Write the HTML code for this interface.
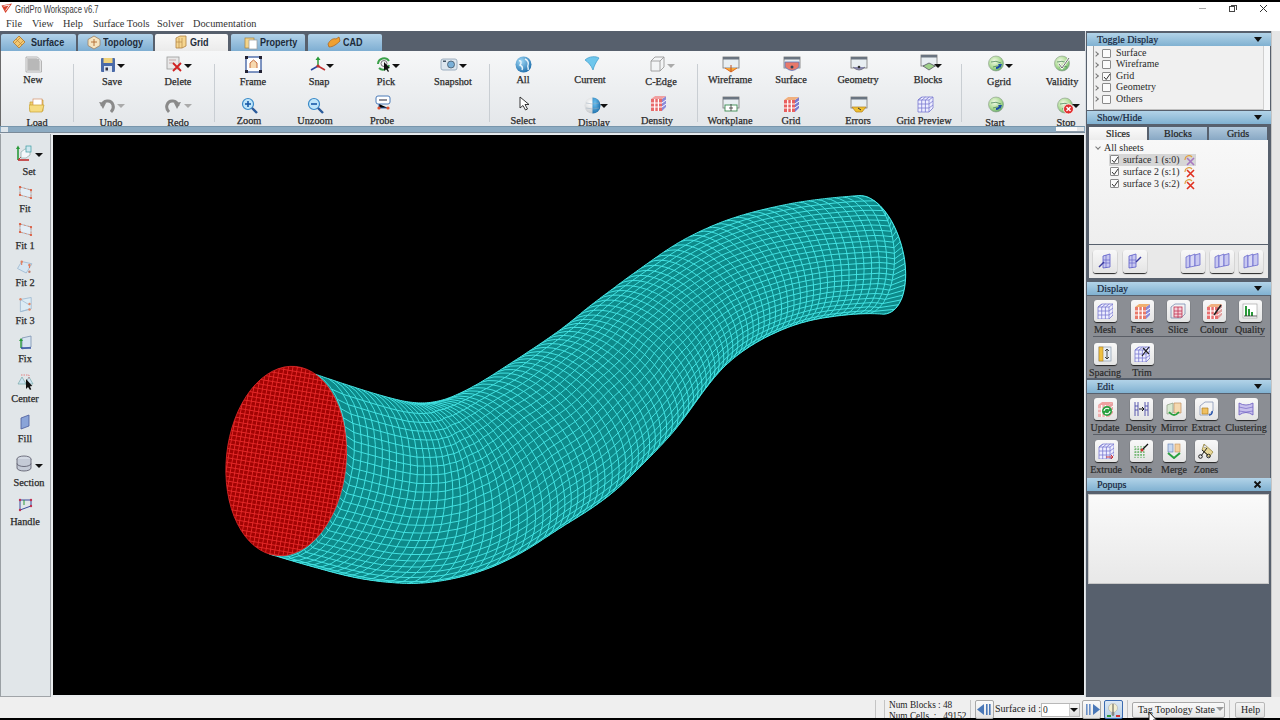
<!DOCTYPE html><html><head><meta charset="utf-8"><style>
*{margin:0;padding:0;box-sizing:border-box}
html,body{width:1280px;height:720px;overflow:hidden;background:#fff;font-family:"Liberation Serif",serif;color:#222}
.abs{position:absolute}
.lbl{position:absolute;-webkit-text-stroke:0.25px #2a2a2a;font-size:10.3px;white-space:nowrap;transform:translateX(-50%);color:#2a2a2a;line-height:12px}
.tab{position:absolute;top:34px;height:17px;border-radius:2px 2px 0 0;background:linear-gradient(#b2d2e9,#7eaed2);font-family:"Liberation Sans",sans-serif;font-weight:bold;font-size:10px;color:#1d2b3a;line-height:17px}
.tab.on{background:linear-gradient(#f8f8f8,#ebebeb)}
.sep{position:absolute;width:1px;background:#c9ced3}
.hdr{position:absolute;left:1087px;width:184px;height:13px;background:linear-gradient(#b2d3e8,#80b1d1);-webkit-text-stroke:0.2px #14243a;font-size:10px;color:#14243a;line-height:13px;padding-left:10px}
.tri{position:absolute;right:9px;top:4px;width:0;height:0;border-left:4.5px solid transparent;border-right:4.5px solid transparent;border-top:5px solid #111}
.btn{position:absolute;width:23px;height:22px;border-radius:3px;background:linear-gradient(#f8f8f8,#e4e4e4);box-shadow:0 1px 1px #222}
.plbl{position:absolute;-webkit-text-stroke:0.2px #2a2a2a;font-size:10px;white-space:nowrap;transform:translateX(-50%);color:#2a2a2a;line-height:12px}
.cb{position:absolute;width:9px;height:9px;border:1px solid #8a8a8a;background:#fbfbfb;border-radius:1px}
.tl{position:absolute;font-size:10px;color:#2a2a2a;line-height:12px;white-space:nowrap}
.chev{position:absolute;width:4px;height:4px;border-right:1px solid #777;border-bottom:1px solid #777;transform:rotate(-45deg)}
</style></head><body>

<div class="abs" style="left:0;top:0;width:1280px;height:2px;background:#000"></div>
<svg class="abs" style="left:1px;top:3px" width="12" height="11"><path d="M0.5 2.5 L11 0.5 L4.5 10 Z" fill="#d8402a"/><path d="M2.5 3.2 L8.5 2 L4.6 7.5" fill="none" stroke="#fff" stroke-width="0.9"/></svg>
<div class="abs" style="left:15px;top:3px;font-family:'Liberation Sans', sans-serif;font-size:10.2px;color:#3a3a3a;line-height:13px;transform:scaleX(0.755);transform-origin:0 0;white-space:nowrap">GridPro Workspace v6.7</div>
<div class="abs" style="left:1199px;top:8px;width:7px;height:1px;background:#aaa"></div>
<div class="abs" style="left:1229px;top:6px;width:6px;height:6px;border:1px solid #444"></div><div class="abs" style="left:1231px;top:5px;width:6px;height:5px;border-top:1px solid #444;border-right:1px solid #444"></div>
<svg class="abs" style="left:1259px;top:4px" width="10" height="9"><path d="M1 1 L8 8 M8 1 L1 8" stroke="#333" stroke-width="1"/></svg>
<div class="abs" style="left:6px;top:17px;font-size:10.3px;color:#333;line-height:13px">File</div>
<div class="abs" style="left:32px;top:17px;font-size:10.3px;color:#333;line-height:13px">View</div>
<div class="abs" style="left:63px;top:17px;font-size:10.3px;color:#333;line-height:13px">Help</div>
<div class="abs" style="left:93px;top:17px;font-size:10.3px;color:#333;line-height:13px">Surface Tools</div>
<div class="abs" style="left:157px;top:17px;font-size:10.3px;color:#333;line-height:13px">Solver</div>
<div class="abs" style="left:193px;top:17px;font-size:10.3px;color:#333;line-height:13px">Documentation</div>
<div class="abs" style="left:0;top:31px;width:1085px;height:20px;background:#57606d"></div>
<div class="tab" style="left:1px;width:75px"></div>
<div class="abs" style="left:31px;top:35px;font-family:'Liberation Sans', sans-serif;font-weight:bold;font-size:10.4px;color:#1d2b3a;line-height:15px;transform:scaleX(0.87);transform-origin:0 0;white-space:nowrap">Surface</div>
<div class="tab" style="left:78px;width:75px"></div>
<div class="abs" style="left:103px;top:35px;font-family:'Liberation Sans', sans-serif;font-weight:bold;font-size:10.4px;color:#1d2b3a;line-height:15px;transform:scaleX(0.87);transform-origin:0 0;white-space:nowrap">Topology</div>
<div class="tab on" style="left:155px;width:73px"></div>
<div class="abs" style="left:190px;top:35px;font-family:'Liberation Sans', sans-serif;font-weight:bold;font-size:10.4px;color:#1d2b3a;line-height:15px;transform:scaleX(0.87);transform-origin:0 0;white-space:nowrap">Grid</div>
<div class="tab" style="left:231px;width:74px"></div>
<div class="abs" style="left:260px;top:35px;font-family:'Liberation Sans', sans-serif;font-weight:bold;font-size:10.4px;color:#1d2b3a;line-height:15px;transform:scaleX(0.87);transform-origin:0 0;white-space:nowrap">Property</div>
<div class="tab" style="left:308px;width:74px"></div>
<div class="abs" style="left:343px;top:35px;font-family:'Liberation Sans', sans-serif;font-weight:bold;font-size:10.4px;color:#1d2b3a;line-height:15px;transform:scaleX(0.87);transform-origin:0 0;white-space:nowrap">CAD</div>
<svg class="abs" style="left:12px;top:35px" width="14" height="15" viewBox="0 0 14 15"><path d="M1 7L7 1L13 7L7 13Z" fill="#f3c870" stroke="#b07830" stroke-width="0.8"/><path d="M4 4L10 10M7 1L13 7M2.5 8.5L8.5 2.5M5.5 11.5L11.5 5.5" stroke="#b07830" stroke-width="0.6"/></svg>
<svg class="abs" style="left:87px;top:35px" width="14" height="15" viewBox="0 0 14 15"><path d="M7 1L13 4.5V10.5L7 14L1 10.5V4.5Z" fill="#f5e4c0" stroke="#a08060" stroke-width="0.8"/><path d="M7 4V11M4 7H10" stroke="#b06a30" stroke-width="0.9"/></svg>
<svg class="abs" style="left:174px;top:35px" width="14" height="15" viewBox="0 0 14 15"><path d="M2 3L6 1H12V11L8 13H2Z" fill="#f6d690" stroke="#b08040" stroke-width="0.8"/><path d="M5 3V13M2 7H8M8 3V13" stroke="#b08040" stroke-width="0.6"/></svg>
<svg class="abs" style="left:244px;top:35px" width="14" height="15" viewBox="0 0 14 15"><rect x="1" y="3" width="9" height="10" fill="#f3d48a" stroke="#a8803a" stroke-width="0.7"/><rect x="5" y="5" width="8" height="9" fill="#fff" stroke="#999" stroke-width="0.7"/></svg>
<svg class="abs" style="left:327px;top:35px" width="14" height="15" viewBox="0 0 14 15"><path d="M1 9C3 5 6 3 9 4L12 2L13 6C10 9 6 12 2 12Z" fill="#f0a030" stroke="#b06a20" stroke-width="0.8"/></svg>
<div class="abs" style="left:0;top:51px;width:1085px;height:75px;background:linear-gradient(#f6f7f8,#e4e7ea);border-left:1px solid #6a6a6a"></div>
<div class="sep" style="left:73px;top:64px;height:58px"></div>
<div class="sep" style="left:214px;top:64px;height:58px"></div>
<div class="sep" style="left:489px;top:64px;height:58px"></div>
<div class="sep" style="left:697px;top:64px;height:58px"></div>
<div class="sep" style="left:961px;top:64px;height:58px"></div>
<svg class="abs" style="left:25px;top:56px" width="18" height="18" viewBox="0 0 18 18"><path d="M1.5 1.5H12L16 5.5V15.5H1.5Z" fill="#c9c9c9" stroke="#f4f4f4" stroke-width="1"/><path d="M1 1H12.5L16.5 5V16H1Z" fill="none" stroke="#9a9a9a" stroke-width="0.7"/><rect x="3" y="3" width="11" height="11" fill="#b8b8b8"/></svg>
<svg class="abs" style="left:100px;top:57px" width="18" height="18" viewBox="0 0 18 18"><rect x="1" y="1" width="14" height="14" rx="1" fill="#4a6aa8"/><rect x="3.5" y="1" width="9" height="5" fill="#f0d27a"/><rect x="4" y="9" width="8" height="6" fill="#dfe6f0"/><rect x="5.5" y="10.5" width="2.5" height="3" fill="#334"/></svg>
<svg class="abs" style="left:166px;top:55px" width="18" height="18" viewBox="0 0 18 18"><rect x="1" y="2" width="12" height="12" fill="#e8e8e8" stroke="#999" stroke-width="0.8"/><path d="M3 5H10M3 8H8" stroke="#b99" stroke-width="0.8"/><path d="M7 8L15 16M15 8L7 16" stroke="#d02020" stroke-width="1.8"/></svg>
<svg class="abs" style="left:245px;top:56px" width="18" height="18" viewBox="0 0 18 18"><rect x="1" y="1" width="15" height="15" fill="#fff" stroke="#2b4f9a" stroke-width="1.2"/><path d="M5 12V7L8.5 4L12 7V12" fill="#f7d9b0" stroke="#c06030" stroke-width="0.9"/><rect x="0" y="0" width="3" height="3" fill="#223"/><rect x="14" y="0" width="3" height="3" fill="#223"/><rect x="0" y="14" width="3" height="3" fill="#223"/><rect x="14" y="14" width="3" height="3" fill="#223"/></svg>
<svg class="abs" style="left:309px;top:56px" width="18" height="18" viewBox="0 0 18 18"><path d="M9 10V2" stroke="#2a9a3a" stroke-width="1.5"/><path d="M6.5 4L9 0.5L11.5 4Z" fill="#2a9a3a"/><path d="M9 10L2 14" stroke="#2846a0" stroke-width="1.5"/><path d="M9 10L16 14" stroke="#c03030" stroke-width="1.5"/><circle cx="9" cy="10" r="1.6" fill="#c03030"/></svg>
<svg class="abs" style="left:375px;top:55px" width="18" height="18" viewBox="0 0 18 18"><path d="M3 9A6 6 0 0 1 14 6" fill="none" stroke="#3aa048" stroke-width="2"/><path d="M14 10A6 6 0 0 1 4 13" fill="none" stroke="#3aa048" stroke-width="2"/><circle cx="9" cy="8.5" r="3" fill="none" stroke="#555" stroke-width="0.8"/><path d="M9 7L9 16L11 14L13 17L14 16.3L12.5 13.5L15 13Z" fill="#111"/></svg>
<svg class="abs" style="left:440px;top:56px" width="18" height="18" viewBox="0 0 18 18"><rect x="1" y="3" width="16" height="11" rx="2" fill="#dde6ee" stroke="#8aa0b4" stroke-width="0.8"/><circle cx="11" cy="8.5" r="3.5" fill="#7ab0d8" stroke="#456" stroke-width="0.8"/><rect x="3" y="4.5" width="3" height="1.5" fill="#456"/></svg>
<svg class="abs" style="left:515px;top:56px" width="18" height="18" viewBox="0 0 18 18"><defs><radialGradient id="gl" cx="0.35" cy="0.3" r="0.8"><stop offset="0" stop-color="#9fd8f6"/><stop offset="1" stop-color="#1668a8"/></radialGradient></defs><circle cx="8.5" cy="8.5" r="8" fill="url(#gl)"/><path d="M4 5C6 4 7 7 5 9C7 10 8 12 7 14M10 3C12 4 14 6 13 9C12 11 14 12 13 14" fill="none" stroke="#e8f4fb" stroke-width="1.4"/></svg>
<svg class="abs" style="left:583px;top:55px" width="18" height="18" viewBox="0 0 18 18"><path d="M2 5C6 1 13 1 16 3C13 7 11 11 10 15C8 10 5 7 2 5Z" fill="#6ec6ec" stroke="#3a98c8" stroke-width="0.7"/></svg>
<svg class="abs" style="left:649px;top:56px" width="18" height="18" viewBox="0 0 18 18"><path d="M2 5L6 1H15V11L11 15H2Z M2 5H11V15 M11 5L15 1" fill="none" stroke="#9a9a9a" stroke-width="0.9"/></svg>
<svg class="abs" style="left:722px;top:56px" width="18" height="18" viewBox="0 0 18 18"><rect x="1" y="1" width="16" height="11" fill="#e8eef2" stroke="#777" stroke-width="0.8"/><rect x="1" y="1" width="16" height="2.5" fill="#6a7480"/><path d="M3 12L9 16L15 12" fill="#f6a83a" stroke="#e06a20" stroke-width="1"/><path d="M9 9V16" stroke="#c05020" stroke-width="1"/></svg>
<svg class="abs" style="left:783px;top:56px" width="18" height="18" viewBox="0 0 18 18"><rect x="1" y="1" width="16" height="11" fill="#e8eef2" stroke="#777" stroke-width="0.8"/><rect x="1" y="1" width="16" height="2.5" fill="#6a7480"/><path d="M2 11Q9 18 16 11V6H2Z" fill="#e8786a" stroke="#5a7ac0" stroke-width="0.8"/><circle cx="9" cy="11" r="1.5" fill="#345"/></svg>
<svg class="abs" style="left:850px;top:56px" width="18" height="18" viewBox="0 0 18 18"><rect x="1" y="1" width="16" height="11" fill="#e8eef2" stroke="#777" stroke-width="0.8"/><rect x="1" y="1" width="16" height="2.5" fill="#6a7480"/><path d="M3 11Q9 17 15 11" fill="#8a8ab0" stroke="#667" stroke-width="0.8"/><circle cx="9" cy="11" r="1.3" fill="#333"/></svg>
<svg class="abs" style="left:920px;top:54px" width="18" height="18" viewBox="0 0 18 18"><rect x="1" y="1" width="16" height="11" fill="#e8eef2" stroke="#777" stroke-width="0.8"/><rect x="1" y="1" width="16" height="2.5" fill="#6a7480"/><path d="M3 12L9 16L15 12L9 9Z" fill="#9fd08a" stroke="#556" stroke-width="0.8"/></svg>
<svg class="abs" style="left:988px;top:55px" width="18" height="18" viewBox="0 0 18 18"><defs><radialGradient id="gbarrow" cx="0.4" cy="0.35" r="0.75"><stop offset="0" stop-color="#f4fbe8"/><stop offset="0.6" stop-color="#a8d890"/><stop offset="1" stop-color="#4a9a5a"/></radialGradient></defs><circle cx="8" cy="8.5" r="7.5" fill="url(#gbarrow)" stroke="#8a9a8a" stroke-width="0.6"/><path d="M3 7Q8 5 13 8M5 12Q9 10 13 12" stroke="#3a7a4a" stroke-width="0.7" fill="none"/><path d="M8 13Q11 13 12 10" fill="none" stroke="#1a4aa8" stroke-width="2"/><path d="M10 9L14 9L12.5 12.5Z" fill="#1a4aa8"/></svg>
<svg class="abs" style="left:1054px;top:55px" width="18" height="18" viewBox="0 0 18 18"><defs><radialGradient id="gbcheck" cx="0.4" cy="0.35" r="0.75"><stop offset="0" stop-color="#f4fbe8"/><stop offset="0.6" stop-color="#a8d890"/><stop offset="1" stop-color="#4a9a5a"/></radialGradient></defs><circle cx="8" cy="8.5" r="7.5" fill="url(#gbcheck)" stroke="#8a9a8a" stroke-width="0.6"/><path d="M3 7Q8 5 13 8M5 12Q9 10 13 12" stroke="#3a7a4a" stroke-width="0.7" fill="none"/><path d="M5 9L8 13L15 3" fill="none" stroke="#fff" stroke-width="2.2"/><path d="M5 9L8 13L15 3" fill="none" stroke="#444" stroke-width="0.8"/></svg>
<svg class="abs" style="left:29px;top:97px" width="18" height="18" viewBox="0 0 18 18"><path d="M1 5H6L7 3H14V14H1Z" fill="#f0d070" stroke="#c8a030" stroke-width="0.7"/><rect x="4" y="2" width="9" height="8" fill="#fff" stroke="#d08050" stroke-width="0.6"/><path d="M0 8H15L13 15H1Z" fill="#f6dc80" stroke="#c8a030" stroke-width="0.7"/></svg>
<svg class="abs" style="left:99px;top:97px" width="18" height="18" viewBox="0 0 18 18"><path d="M3 9C4 3 12 2 14 8C15 11 13 14 12 15" fill="none" stroke="#8a8a8a" stroke-width="3"/><path d="M0 5L4 12L7 6Z" fill="#8a8a8a"/></svg>
<svg class="abs" style="left:165px;top:97px" width="18" height="18" viewBox="0 0 18 18"><g transform="translate(16 0) scale(-1 1)"><path d="M3 9C4 3 12 2 14 8C15 11 13 14 12 15" fill="none" stroke="#8a8a8a" stroke-width="3"/><path d="M0 5L4 12L7 6Z" fill="#8a8a8a"/></g></svg>
<svg class="abs" style="left:241px;top:97px" width="18" height="18" viewBox="0 0 18 18"><circle cx="7" cy="7" r="5.5" fill="#bfe6fa" stroke="#3a8ac8" stroke-width="1.2"/><path d="M11 11L16 16" stroke="#2a5a9a" stroke-width="2.4"/><path d="M4 7H10" stroke="#1a5aa8" stroke-width="1.6"/><path d="M7 4V10" stroke="#1a5aa8" stroke-width="1.6"/></svg>
<svg class="abs" style="left:307px;top:97px" width="18" height="18" viewBox="0 0 18 18"><circle cx="7" cy="7" r="5.5" fill="#bfe6fa" stroke="#3a8ac8" stroke-width="1.2"/><path d="M11 11L16 16" stroke="#2a5a9a" stroke-width="2.4"/><path d="M4 7H10" stroke="#1a5aa8" stroke-width="1.6"/></svg>
<svg class="abs" style="left:374px;top:95px" width="18" height="18" viewBox="0 0 18 18"><rect x="2" y="1" width="14" height="8" rx="2" fill="#fff" stroke="#4a7ab8" stroke-width="1"/><path d="M5 5H13" stroke="#445" stroke-width="1.2"/><path d="M5 9V13H14" stroke="#3a6ab0" stroke-width="1"/><circle cx="5" cy="13" r="1.6" fill="#e05030"/><circle cx="14" cy="13" r="1.6" fill="#e05030"/></svg>
<svg class="abs" style="left:519px;top:96px" width="18" height="18" viewBox="0 0 18 18"><path d="M1 1V12L4 9.5L6.5 14L8.5 13L6 8.5H10Z" fill="#fff" stroke="#222" stroke-width="0.9"/></svg>
<svg class="abs" style="left:584px;top:97px" width="18" height="18" viewBox="0 0 18 18"><defs><radialGradient id="hg1" cx="0.4" cy="0.35" r="0.8"><stop offset="0" stop-color="#ffffff"/><stop offset="1" stop-color="#b8bcc0"/></radialGradient><radialGradient id="hg2" cx="0.3" cy="0.35" r="0.9"><stop offset="0" stop-color="#6ac0f0"/><stop offset="1" stop-color="#0a5a98"/></radialGradient></defs><circle cx="8.5" cy="8.5" r="8" fill="url(#hg1)"/><path d="M8.5 0.5A8 8 0 0 1 8.5 16.5Z" fill="url(#hg2)"/><path d="M2 6Q8.5 8 15 6M2 11Q8.5 13 15 11" stroke="#9ab" stroke-width="0.5" fill="none"/></svg>
<svg class="abs" style="left:650px;top:95px" width="18" height="18" viewBox="0 0 18 18"><path d="M1 4L5 1H16V12L12 16H1Z" fill="#fff"/><rect x="1" y="4" width="11" height="12" fill="#e86a6a"/><path d="M12 4L16 1V12L12 16Z" fill="#8a8ad8"/><path d="M1 4L5 1H16L12 4Z" fill="#f0a0a0"/><path d="M1 8H12M1 12H12M4.7 4V16M8.4 4V16" stroke="#fff" stroke-width="1.2"/><path d="M12 8L16 5M12 12L16 9" stroke="#fff" stroke-width="1"/></svg>
<svg class="abs" style="left:722px;top:96px" width="18" height="18" viewBox="0 0 18 18"><rect x="1" y="1" width="16" height="11" fill="#e8eef2" stroke="#777" stroke-width="0.8"/><rect x="1" y="1" width="16" height="2.5" fill="#6a7480"/><rect x="3" y="9" width="12" height="6" fill="#fff" stroke="#3a8a50" stroke-width="0.9"/><path d="M9 8V15M7 12H11" stroke="#333" stroke-width="0.8"/></svg>
<svg class="abs" style="left:783px;top:96px" width="18" height="18" viewBox="0 0 18 18"><path d="M1 4L5 1H16V12L12 16H1Z" fill="#fff"/><rect x="1" y="4" width="11" height="12" fill="#e86060"/><path d="M12 4L16 1V12L12 16Z" fill="#7a7ad0"/><path d="M1 4L5 1H16L12 4Z" fill="#f0b080"/><path d="M1 8H12M1 12H12M4.7 4V16M8.4 4V16" stroke="#fff" stroke-width="1.2"/><path d="M12 8L16 5M12 12L16 9" stroke="#fff" stroke-width="1"/></svg>
<svg class="abs" style="left:850px;top:96px" width="18" height="18" viewBox="0 0 18 18"><rect x="1" y="1" width="16" height="11" fill="#e8eef2" stroke="#777" stroke-width="0.8"/><rect x="1" y="1" width="16" height="2.5" fill="#6a7480"/><path d="M2 11H16L12 16H6Z" fill="#f0c030" stroke="#b08020" stroke-width="0.7"/><path d="M8 12L11 14" stroke="#333" stroke-width="1"/></svg>
<svg class="abs" style="left:917px;top:96px" width="18" height="18" viewBox="0 0 18 18"><path d="M1 4L5 1H16V12L12 16H1Z" fill="#eef" stroke="#7a7ad0" stroke-width="0.8"/><path d="M1 8H12M1 12H12M4.7 4V16M8.4 4V16M12 4V16M12 8L16 5M12 12L16 9M1 4H12L16 1M5 1L1 4M8.5 1L5 4M12.3 1L8.5 4" stroke="#7a7ad0" stroke-width="0.8" fill="none"/></svg>
<svg class="abs" style="left:988px;top:96px" width="18" height="18" viewBox="0 0 18 18"><defs><radialGradient id="gbarrow" cx="0.4" cy="0.35" r="0.75"><stop offset="0" stop-color="#f4fbe8"/><stop offset="0.6" stop-color="#a8d890"/><stop offset="1" stop-color="#4a9a5a"/></radialGradient></defs><circle cx="8" cy="8.5" r="7.5" fill="url(#gbarrow)" stroke="#8a9a8a" stroke-width="0.6"/><path d="M3 7Q8 5 13 8M5 12Q9 10 13 12" stroke="#3a7a4a" stroke-width="0.7" fill="none"/><path d="M8 13Q11 13 12 10" fill="none" stroke="#1a4aa8" stroke-width="2"/><path d="M10 9L14 9L12.5 12.5Z" fill="#1a4aa8"/></svg>
<svg class="abs" style="left:1057px;top:97px" width="18" height="18" viewBox="0 0 18 18"><defs><radialGradient id="gbstop" cx="0.4" cy="0.35" r="0.75"><stop offset="0" stop-color="#f4fbe8"/><stop offset="0.6" stop-color="#a8d890"/><stop offset="1" stop-color="#4a9a5a"/></radialGradient></defs><circle cx="8" cy="8.5" r="7.5" fill="url(#gbstop)" stroke="#8a9a8a" stroke-width="0.6"/><path d="M3 7Q8 5 13 8M5 12Q9 10 13 12" stroke="#3a7a4a" stroke-width="0.7" fill="none"/><circle cx="11.5" cy="12" r="5" fill="#e03030" stroke="#fff" stroke-width="0.8"/><path d="M9.5 10L13.5 14M13.5 10L9.5 14" stroke="#fff" stroke-width="1.4"/></svg>
<div class="abs" style="left:117px;top:64px;width:0;height:0;border-left:4px solid transparent;border-right:4px solid transparent;border-top:4px solid #111"></div>
<div class="abs" style="left:184px;top:64px;width:0;height:0;border-left:4px solid transparent;border-right:4px solid transparent;border-top:4px solid #111"></div>
<div class="abs" style="left:326px;top:64px;width:0;height:0;border-left:4px solid transparent;border-right:4px solid transparent;border-top:4px solid #111"></div>
<div class="abs" style="left:392px;top:64px;width:0;height:0;border-left:4px solid transparent;border-right:4px solid transparent;border-top:4px solid #111"></div>
<div class="abs" style="left:459px;top:64px;width:0;height:0;border-left:4px solid transparent;border-right:4px solid transparent;border-top:4px solid #111"></div>
<div class="abs" style="left:667px;top:64px;width:0;height:0;border-left:4px solid transparent;border-right:4px solid transparent;border-top:4px solid #aaa"></div>
<div class="abs" style="left:934px;top:64px;width:0;height:0;border-left:4px solid transparent;border-right:4px solid transparent;border-top:4px solid #111"></div>
<div class="abs" style="left:1005px;top:64px;width:0;height:0;border-left:4px solid transparent;border-right:4px solid transparent;border-top:4px solid #111"></div>
<div class="abs" style="left:117px;top:104px;width:0;height:0;border-left:4px solid transparent;border-right:4px solid transparent;border-top:4px solid #aaa"></div>
<div class="abs" style="left:184px;top:104px;width:0;height:0;border-left:4px solid transparent;border-right:4px solid transparent;border-top:4px solid #aaa"></div>
<div class="abs" style="left:600px;top:104px;width:0;height:0;border-left:4px solid transparent;border-right:4px solid transparent;border-top:4px solid #111"></div>
<div class="abs" style="left:1072px;top:104px;width:0;height:0;border-left:4px solid transparent;border-right:4px solid transparent;border-top:4px solid #111"></div>
<div class="lbl" style="left:33px;top:74px">New</div>
<div class="lbl" style="left:112px;top:76px">Save</div>
<div class="lbl" style="left:178px;top:76px">Delete</div>
<div class="lbl" style="left:253px;top:76px">Frame</div>
<div class="lbl" style="left:319px;top:76px">Snap</div>
<div class="lbl" style="left:386px;top:76px">Pick</div>
<div class="lbl" style="left:453px;top:76px">Snapshot</div>
<div class="lbl" style="left:523px;top:74px">All</div>
<div class="lbl" style="left:590px;top:74px">Current</div>
<div class="lbl" style="left:661px;top:76px">C-Edge</div>
<div class="lbl" style="left:730px;top:74px">Wireframe</div>
<div class="lbl" style="left:791px;top:74px">Surface</div>
<div class="lbl" style="left:858px;top:74px">Geometry</div>
<div class="lbl" style="left:928px;top:74px">Blocks</div>
<div class="lbl" style="left:999px;top:76px">Ggrid</div>
<div class="lbl" style="left:1062px;top:76px">Validity</div>
<div class="lbl" style="left:37px;top:117px">Load</div>
<div class="lbl" style="left:111px;top:117px">Undo</div>
<div class="lbl" style="left:178px;top:117px">Redo</div>
<div class="lbl" style="left:249px;top:115px">Zoom</div>
<div class="lbl" style="left:315px;top:115px">Unzoom</div>
<div class="lbl" style="left:382px;top:115px">Probe</div>
<div class="lbl" style="left:523px;top:115px">Select</div>
<div class="lbl" style="left:594px;top:117px">Display</div>
<div class="lbl" style="left:657px;top:115px">Density</div>
<div class="lbl" style="left:730px;top:115px">Workplane</div>
<div class="lbl" style="left:791px;top:115px">Grid</div>
<div class="lbl" style="left:858px;top:115px">Errors</div>
<div class="lbl" style="left:924px;top:115px">Grid Preview</div>
<div class="lbl" style="left:995px;top:117px">Start</div>
<div class="lbl" style="left:1066px;top:117px">Stop</div>
<div class="abs" style="left:0;top:126px;width:1085px;height:6px;background:#8cabc2;border-top:1px solid #7896ac"></div>
<div class="abs" style="left:1px;top:127px;width:7px;height:5px;background:#dde5eb"></div>
<div class="abs" style="left:1056px;top:127px;width:28px;height:5px;background:linear-gradient(90deg,#fafafa 75%,#e4e6e8 75%);border-bottom:1px solid #8a9aa8"></div>
<div class="abs" style="left:0;top:132px;width:1085px;height:1px;background:#7a8a98"></div><div class="abs" style="left:0;top:133px;width:1085px;height:2px;background:#e3e8ec"></div>
<div class="abs" style="left:0;top:134px;width:51px;height:563px;background:#e1e6e9;border-left:1px solid #9aa0a4;border-right:1px solid #a0a4a8;border-bottom:1px solid #a0a4a8"></div>
<div class="lbl" style="left:29px;top:166px">Set</div>
<div class="lbl" style="left:25px;top:203px">Fit</div>
<div class="lbl" style="left:25px;top:240px">Fit 1</div>
<div class="lbl" style="left:25px;top:277px">Fit 2</div>
<div class="lbl" style="left:25px;top:315px">Fit 3</div>
<div class="lbl" style="left:25px;top:353px">Fix</div>
<div class="lbl" style="left:25px;top:393px">Center</div>
<div class="lbl" style="left:25px;top:433px">Fill</div>
<div class="lbl" style="left:29px;top:477px">Section</div>
<div class="lbl" style="left:25px;top:516px">Handle</div>
<svg class="abs" style="left:16px;top:145px" width="18" height="18" viewBox="0 0 18 18"><path d="M2 15V3" stroke="#2a9a3a" stroke-width="1.6"/><path d="M0 4L2 0.5L4 4Z" fill="#2a9a3a"/><path d="M2 15H13" stroke="#c03030" stroke-width="1.6"/><path d="M2 15L6 11" stroke="#c03030" stroke-width="1"/><path d="M5 7L9 4H14V10L10 13H5Z" fill="#f4f8fb" stroke="#8aa" stroke-width="0.7"/><rect x="10" y="1" width="5" height="6" fill="#cfe8f0" stroke="#3a9aa0" stroke-width="0.7"/></svg>
<svg class="abs" style="left:18px;top:185px" width="18" height="18" viewBox="0 0 18 18"><path d="M2 2L13 5V13L2 10Z" fill="#e4eef6" stroke="#9ab" stroke-width="0.7"/><path d="M2 2L13 5V13L2 10Z" fill="none" stroke="#e08a6a" stroke-width="0.8" stroke-dasharray="2 2"/><circle cx="2" cy="2" r="1.1" fill="#e05030"/><circle cx="13" cy="5" r="1.1" fill="#e05030"/><circle cx="2" cy="10" r="1.1" fill="#e05030"/><circle cx="13" cy="13" r="1.1" fill="#e05030"/></svg>
<svg class="abs" style="left:18px;top:222px" width="18" height="18" viewBox="0 0 18 18"><path d="M2 2L13 5V13L2 10Z" fill="#e4eef6" stroke="#9ab" stroke-width="0.7"/><path d="M2 2L13 5V13L2 10Z" fill="none" stroke="#e08a6a" stroke-width="0.8" stroke-dasharray="2 2"/><circle cx="2" cy="2" r="1.1" fill="#e05030"/><circle cx="13" cy="5" r="1.1" fill="#e05030"/><circle cx="2" cy="10" r="1.1" fill="#e05030"/><circle cx="13" cy="13" r="1.1" fill="#e05030"/></svg>
<svg class="abs" style="left:17px;top:260px" width="18" height="18" viewBox="0 0 18 18"><path d="M0.5 8.5L4.7 1.5L15 3.8L9.2 13Z" fill="#d6e6f2" stroke="#9ab8d0" stroke-width="0.8"/><path d="M4.7 1.5V5M12.4 4.9V8" stroke="#e07050" stroke-width="1"/><circle cx="4.7" cy="1.8" r="1.2" fill="#e08060"/><circle cx="12.4" cy="4.9" r="1.2" fill="#e08060"/><circle cx="12.4" cy="11.7" r="1.2" fill="#c08070"/></svg>
<svg class="abs" style="left:18px;top:297px" width="18" height="18" viewBox="0 0 18 18"><path d="M2.4 2.5L13.2 0.5V12L2.4 14.7Z" fill="#dcebf4" stroke="#9ab8d0" stroke-width="0.8"/><path d="M2.4 2.5L11.5 8M2.4 14.7L11.5 12" stroke="#9ab8d0" stroke-width="0.7"/><circle cx="2.5" cy="2.2" r="1.2" fill="#e08a6a"/><circle cx="11.5" cy="7" r="1.2" fill="#e08a6a"/><circle cx="11.5" cy="12.5" r="1.2" fill="#e08a6a"/></svg>
<svg class="abs" style="left:18px;top:335px" width="18" height="18" viewBox="0 0 18 18"><path d="M4 3L13 1V12L4 14Z" fill="#d8e4f0" stroke="#7a90b0" stroke-width="0.8"/><path d="M3 13V5" stroke="#2a9a3a" stroke-width="1.4"/><path d="M1 6L3 3L5 6Z" fill="#2a9a3a"/><path d="M3 13H13" stroke="#2a4aa0" stroke-width="1.4"/></svg>
<svg class="abs" style="left:17px;top:373px" width="18" height="18" viewBox="0 0 18 18"><path d="M1 11L5 4L9 11Z" fill="#cfe3f2" stroke="#7aa" stroke-width="0.7"/><path d="M8 11L12 4L16 11Z" fill="#cfe3f2" stroke="#7aa" stroke-width="0.7"/><path d="M4 2H12V6" fill="none" stroke="#e06a6a" stroke-width="0.8" stroke-dasharray="1.5 1"/><path d="M9 6V16L11 14L13 17L14.3 16.3L12.8 13.5L15.3 13Z" fill="#111"/></svg>
<svg class="abs" style="left:19px;top:414px" width="18" height="18" viewBox="0 0 18 18"><path d="M2 4L10 1V12L2 15Z" fill="#8aa4d8" stroke="#4a5a9a" stroke-width="0.8"/></svg>
<svg class="abs" style="left:16px;top:455px" width="18" height="18" viewBox="0 0 18 18"><ellipse cx="8" cy="4" rx="7" ry="3" fill="#d4dae4" stroke="#556" stroke-width="0.8"/><path d="M1 4V13A7 3 0 0 0 15 13V4" fill="#c4cad6" stroke="#556" stroke-width="0.8"/><path d="M1 8.5A7 3 0 0 0 15 8.5" fill="none" stroke="#556" stroke-width="0.8"/></svg>
<svg class="abs" style="left:17px;top:497px" width="18" height="18" viewBox="0 0 18 18"><path d="M3 3H14M3 3V13M14 3V9M3 13L14 9" fill="none" stroke="#3a4a9a" stroke-width="1"/><path d="M7 3V8" stroke="#2a9a3a" stroke-width="1"/><circle cx="3" cy="3" r="1.2" fill="#c03050"/><circle cx="14" cy="3" r="1.2" fill="#c03050"/><circle cx="3" cy="13" r="1.2" fill="#c03050"/><circle cx="14" cy="9" r="1.2" fill="#c03050"/></svg>
<div class="abs" style="left:35px;top:153px;width:0;height:0;border-left:4px solid transparent;border-right:4px solid transparent;border-top:4px solid #111"></div>
<div class="abs" style="left:35px;top:464px;width:0;height:0;border-left:4px solid transparent;border-right:4px solid transparent;border-top:4px solid #111"></div>
<div class="abs" style="left:51px;top:134px;width:1034px;height:563px;background:#e9ecee"></div>
<div class="abs" style="left:53px;top:135px;width:1031px;height:560px;background:#000"></div>
<svg class="abs" style="left:0;top:0" width="1280" height="720" viewBox="0 0 1280 720"><defs><clipPath id="pc"><path d="M315.7 374.4 L317.6 375.0 L319.5 375.7 L321.5 376.3 L323.4 377.0 L325.3 377.6 L327.2 378.3 L329.1 378.9 L331.0 379.5 L333.0 380.2 L334.9 380.8 L336.8 381.5 L338.7 382.1 L340.6 382.7 L342.5 383.4 L344.5 384.0 L346.4 384.6 L348.3 385.3 L350.2 385.9 L352.2 386.5 L354.1 387.1 L356.0 387.8 L357.9 388.4 L359.9 389.0 L361.8 389.6 L363.7 390.2 L365.6 390.8 L367.6 391.4 L369.5 392.0 L371.4 392.6 L373.4 393.2 L375.3 393.7 L377.3 394.3 L379.2 394.9 L381.1 395.4 L383.1 396.0 L385.0 396.5 L387.0 397.1 L388.9 397.6 L390.9 398.1 L392.8 398.6 L394.8 399.1 L396.8 399.6 L398.7 400.0 L400.7 400.5 L402.7 400.9 L404.6 401.3 L406.6 401.6 L408.6 401.9 L410.6 402.2 L412.6 402.4 L414.6 402.6 L416.6 402.8 L418.6 402.9 L420.6 402.9 L422.6 402.9 L424.6 402.9 L426.6 402.8 L428.6 402.6 L430.5 402.4 L432.5 402.1 L434.5 401.8 L436.5 401.4 L438.4 401.0 L440.4 400.6 L442.3 400.0 L444.2 399.5 L446.1 398.9 L448.0 398.2 L449.9 397.5 L451.8 396.8 L453.6 396.0 L455.5 395.2 L457.3 394.4 L459.1 393.6 L461.0 392.7 L462.8 391.8 L464.6 390.9 L466.4 390.0 L468.2 389.1 L470.0 388.2 L471.8 387.2 L473.5 386.2 L475.3 385.3 L477.1 384.3 L478.8 383.3 L480.6 382.3 L482.3 381.2 L484.0 380.2 L485.8 379.1 L487.5 378.1 L489.2 377.0 L490.9 376.0 L492.6 374.9 L494.3 373.8 L496.0 372.7 L497.7 371.6 L499.4 370.5 L501.1 369.4 L502.8 368.3 L504.5 367.2 L506.2 366.1 L507.9 365.0 L509.6 363.9 L511.3 362.8 L513.0 361.7 L514.7 360.6 L516.4 359.5 L518.1 358.4 L519.8 357.3 L521.5 356.2 L523.2 355.1 L524.9 354.0 L526.5 352.8 L528.2 351.7 L529.9 350.6 L531.6 349.5 L533.3 348.4 L535.0 347.3 L536.7 346.2 L538.3 345.0 L540.0 343.9 L541.7 342.8 L543.4 341.6 L545.0 340.5 L546.7 339.3 L548.4 338.2 L550.0 337.0 L551.7 335.9 L553.3 334.7 L555.0 333.5 L556.6 332.4 L558.3 331.2 L559.9 330.0 L561.5 328.8 L563.1 327.6 L564.7 326.3 L566.3 325.1 L567.9 323.9 L569.5 322.6 L571.1 321.3 L572.7 320.1 L574.2 318.8 L575.8 317.5 L577.3 316.2 L578.9 315.0 L580.5 313.7 L582.0 312.4 L583.6 311.1 L585.1 309.8 L586.7 308.6 L588.3 307.3 L589.9 306.0 L591.5 304.8 L593.1 303.6 L594.7 302.3 L596.3 301.1 L597.9 299.9 L599.5 298.7 L601.1 297.4 L602.7 296.2 L604.4 295.0 L606.0 293.8 L607.6 292.6 L609.2 291.4 L610.8 290.2 L612.5 289.0 L614.1 287.8 L615.7 286.6 L617.3 285.3 L618.9 284.1 L620.6 282.9 L622.2 281.7 L623.8 280.5 L625.4 279.3 L627.1 278.1 L628.7 276.9 L630.3 275.7 L632.0 274.6 L633.6 273.4 L635.3 272.2 L636.9 271.0 L638.5 269.8 L640.2 268.7 L641.8 267.5 L643.5 266.3 L645.1 265.1 L646.8 264.0 L648.4 262.8 L650.1 261.6 L651.7 260.5 L653.4 259.3 L655.0 258.1 L656.7 257.0 L658.3 255.8 L660.0 254.6 L661.7 253.5 L663.3 252.4 L665.0 251.2 L666.7 250.1 L668.4 249.0 L670.1 247.9 L671.8 246.8 L673.5 245.7 L675.2 244.7 L676.9 243.6 L678.7 242.6 L680.4 241.6 L682.2 240.6 L683.9 239.6 L685.7 238.6 L687.5 237.7 L689.3 236.7 L691.1 235.8 L692.9 234.9 L694.7 234.0 L696.5 233.1 L698.3 232.2 L700.1 231.3 L701.9 230.5 L703.8 229.6 L705.6 228.8 L707.5 228.0 L709.3 227.1 L711.2 226.3 L713.0 225.6 L714.9 224.8 L716.8 224.0 L718.6 223.3 L720.5 222.5 L722.4 221.8 L724.3 221.1 L726.2 220.4 L728.1 219.7 L730.0 219.1 L731.9 218.4 L733.8 217.8 L735.8 217.2 L737.7 216.5 L739.6 215.9 L741.5 215.3 L743.5 214.8 L745.4 214.2 L747.4 213.6 L749.3 213.1 L751.3 212.6 L753.2 212.0 L755.2 211.5 L757.1 211.0 L759.1 210.5 L761.0 210.1 L763.0 209.6 L765.0 209.1 L766.9 208.7 L768.9 208.2 L770.9 207.7 L772.9 207.3 L774.8 206.9 L776.8 206.4 L778.8 206.0 L780.8 205.6 L782.7 205.2 L784.7 204.8 L786.7 204.4 L788.7 204.0 L790.7 203.6 L792.7 203.2 L794.6 202.9 L796.6 202.5 L798.6 202.2 L800.6 201.9 L802.6 201.6 L804.6 201.3 L806.6 201.0 L808.6 200.7 L810.6 200.4 L812.6 200.1 L814.6 199.9 L816.6 199.6 L818.6 199.4 L820.7 199.1 L822.7 198.9 L824.7 198.7 L826.7 198.4 L828.7 198.2 L830.7 198.0 L832.7 197.8 L834.7 197.6 L836.7 197.4 L838.7 197.2 L840.8 197.0 L842.8 196.9 L844.8 196.7 L846.8 196.5 L848.8 196.4 L850.8 196.2 L852.9 196.0 L854.9 195.9 L856.9 195.7 L858.9 195.6 L861.5 195.6 L864.2 196.0 L866.9 196.7 L869.6 197.9 L872.3 199.4 L875.1 201.3 L877.8 203.5 L880.5 206.0 L883.1 208.9 L885.7 212.1 L888.1 215.5 L890.5 219.2 L892.7 223.1 L894.8 227.3 L896.7 231.6 L898.5 236.1 L900.1 240.7 L901.5 245.3 L902.7 250.1 L903.8 254.9 L904.6 259.6 L905.2 264.4 L905.5 269.1 L905.7 273.7 L905.6 278.1 L905.3 282.4 L904.8 286.6 L904.1 290.5 L903.2 294.2 L902.1 297.7 L900.7 300.8 L899.2 303.7 L897.5 306.3 L895.6 308.5 L893.6 310.4 L891.4 311.9 L889.1 313.0 L886.7 313.8 L884.2 314.2 L881.8 314.1 L879.5 313.9 L877.1 313.8 L874.7 313.7 L872.3 313.7 L870.0 313.6 L867.6 313.7 L865.2 313.7 L862.8 313.8 L860.5 313.9 L858.1 314.0 L855.7 314.2 L853.3 314.3 L851.0 314.5 L848.6 314.7 L846.2 315.0 L843.9 315.2 L841.5 315.5 L839.1 315.7 L836.8 316.0 L834.4 316.3 L832.0 316.7 L829.7 317.0 L827.3 317.4 L825.0 317.7 L822.6 318.1 L820.3 318.5 L817.9 319.0 L815.6 319.4 L813.3 319.9 L810.9 320.4 L808.6 321.0 L806.3 321.6 L804.0 322.2 L801.7 322.8 L799.4 323.5 L797.2 324.2 L794.9 324.9 L792.7 325.7 L790.4 326.5 L788.2 327.3 L786.0 328.2 L783.8 329.1 L781.6 330.0 L779.4 330.9 L777.2 331.9 L775.0 332.9 L772.9 333.9 L770.7 334.9 L768.6 336.0 L766.5 337.0 L764.4 338.1 L762.3 339.2 L760.2 340.4 L758.1 341.6 L756.0 342.7 L754.0 344.0 L752.0 345.2 L749.9 346.5 L748.0 347.8 L746.0 349.1 L744.0 350.4 L742.1 351.8 L740.2 353.2 L738.3 354.6 L736.4 356.1 L734.5 357.6 L732.7 359.1 L730.9 360.6 L729.1 362.2 L727.3 363.8 L725.6 365.4 L723.9 367.1 L722.2 368.8 L720.6 370.5 L719.0 372.2 L717.4 374.0 L715.8 375.8 L714.3 377.6 L712.8 379.4 L711.3 381.3 L709.8 383.2 L708.3 385.0 L706.9 386.9 L705.4 388.8 L704.0 390.7 L702.6 392.6 L701.2 394.6 L699.8 396.5 L698.4 398.4 L697.0 400.3 L695.6 402.3 L694.2 404.2 L692.8 406.2 L691.4 408.1 L690.0 410.0 L688.6 412.0 L687.2 413.9 L685.8 415.8 L684.4 417.7 L683.0 419.6 L681.5 421.5 L680.1 423.4 L678.6 425.3 L677.1 427.2 L675.6 429.0 L674.1 430.9 L672.6 432.7 L671.0 434.5 L669.5 436.3 L667.9 438.1 L666.3 439.8 L664.7 441.6 L663.1 443.3 L661.4 445.1 L659.8 446.8 L658.1 448.5 L656.5 450.2 L654.8 452.0 L653.2 453.7 L651.5 455.4 L649.8 457.1 L648.2 458.8 L646.5 460.5 L644.8 462.2 L643.1 463.9 L641.5 465.6 L639.8 467.2 L638.1 468.9 L636.4 470.6 L634.7 472.3 L633.0 474.0 L631.3 475.6 L629.6 477.3 L627.9 479.0 L626.2 480.6 L624.4 482.2 L622.7 483.9 L620.9 485.5 L619.2 487.1 L617.4 488.6 L615.6 490.2 L613.7 491.7 L611.9 493.2 L610.0 494.7 L608.2 496.2 L606.3 497.7 L604.4 499.1 L602.5 500.5 L600.6 501.9 L598.6 503.3 L596.7 504.7 L594.7 506.1 L592.8 507.4 L590.8 508.8 L588.8 510.1 L586.8 511.4 L584.8 512.7 L582.8 514.0 L580.8 515.2 L578.8 516.5 L576.8 517.8 L574.8 519.0 L572.7 520.3 L570.7 521.5 L568.7 522.8 L566.6 524.0 L564.6 525.3 L562.6 526.6 L560.6 527.9 L558.6 529.1 L556.6 530.4 L554.6 531.7 L552.6 533.0 L550.6 534.3 L548.6 535.7 L546.6 537.0 L544.6 538.3 L542.6 539.6 L540.6 540.9 L538.7 542.2 L536.7 543.5 L534.6 544.8 L532.6 546.1 L530.6 547.3 L528.6 548.6 L526.5 549.8 L524.5 551.0 L522.4 552.2 L520.3 553.4 L518.3 554.5 L516.2 555.6 L514.1 556.8 L511.9 557.9 L509.8 558.9 L507.7 560.0 L505.5 561.0 L503.4 562.0 L501.2 563.0 L499.0 564.0 L496.9 564.9 L494.7 565.9 L492.5 566.8 L490.2 567.7 L488.0 568.5 L485.8 569.3 L483.6 570.2 L481.3 570.9 L479.1 571.7 L476.8 572.4 L474.5 573.2 L472.2 573.8 L470.0 574.5 L467.7 575.2 L465.4 575.8 L463.1 576.4 L460.7 576.9 L458.4 577.5 L456.1 578.0 L453.8 578.5 L451.4 579.0 L449.1 579.5 L446.8 579.9 L444.4 580.3 L442.1 580.7 L439.7 581.1 L437.4 581.4 L435.0 581.8 L432.6 582.1 L430.3 582.3 L427.9 582.6 L425.5 582.8 L423.2 583.0 L420.8 583.1 L418.4 583.2 L416.0 583.3 L413.7 583.4 L411.3 583.4 L408.9 583.4 L406.5 583.3 L404.2 583.3 L401.8 583.2 L399.4 583.1 L397.0 583.0 L394.6 582.8 L392.3 582.6 L389.9 582.4 L387.5 582.2 L385.1 582.0 L382.8 581.8 L380.4 581.5 L378.0 581.2 L375.7 580.9 L373.3 580.6 L371.0 580.3 L368.6 579.9 L366.2 579.5 L363.9 579.2 L361.5 578.8 L359.2 578.3 L356.9 577.9 L354.5 577.4 L352.2 576.9 L349.9 576.4 L347.5 575.9 L345.2 575.4 L342.9 574.8 L340.6 574.3 L338.3 573.7 L336.0 573.1 L333.7 572.5 L331.4 571.9 L329.0 571.3 L326.7 570.6 L324.4 570.0 L322.2 569.4 L319.9 568.7 L317.6 568.1 L315.3 567.5 L313.0 566.8 L310.7 566.2 L308.4 565.5 L306.1 564.9 L303.8 564.2 L301.5 563.6 L299.2 562.9 L296.9 562.2 L294.6 561.6 L292.3 560.9 L290.1 560.2 L287.8 559.6 L285.5 558.9 L283.2 558.2 L280.9 557.5 L278.6 556.8 L276.3 556.1 L274.1 555.5 L271.8 554.8 L269.5 554.1 L275.2 555.3 L281.0 555.7 L286.8 555.2 L292.7 553.8 L298.5 551.5 L304.1 548.4 L309.6 544.4 L314.9 539.7 L319.9 534.2 L324.6 528.0 L328.9 521.2 L332.9 513.8 L336.4 506.0 L339.4 497.7 L341.9 489.1 L343.9 480.2 L345.3 471.1 L346.2 461.9 L346.6 452.7 L346.3 443.6 L345.5 434.7 L344.1 426.0 L342.2 417.6 L339.8 409.7 L336.9 402.2 L333.4 395.3 L329.6 389.0 L325.3 383.4 L320.7 378.5Z"/></clipPath></defs>
<path d="M315.7 374.4 L317.6 375.0 L319.5 375.7 L321.5 376.3 L323.4 377.0 L325.3 377.6 L327.2 378.3 L329.1 378.9 L331.0 379.5 L333.0 380.2 L334.9 380.8 L336.8 381.5 L338.7 382.1 L340.6 382.7 L342.5 383.4 L344.5 384.0 L346.4 384.6 L348.3 385.3 L350.2 385.9 L352.2 386.5 L354.1 387.1 L356.0 387.8 L357.9 388.4 L359.9 389.0 L361.8 389.6 L363.7 390.2 L365.6 390.8 L367.6 391.4 L369.5 392.0 L371.4 392.6 L373.4 393.2 L375.3 393.7 L377.3 394.3 L379.2 394.9 L381.1 395.4 L383.1 396.0 L385.0 396.5 L387.0 397.1 L388.9 397.6 L390.9 398.1 L392.8 398.6 L394.8 399.1 L396.8 399.6 L398.7 400.0 L400.7 400.5 L402.7 400.9 L404.6 401.3 L406.6 401.6 L408.6 401.9 L410.6 402.2 L412.6 402.4 L414.6 402.6 L416.6 402.8 L418.6 402.9 L420.6 402.9 L422.6 402.9 L424.6 402.9 L426.6 402.8 L428.6 402.6 L430.5 402.4 L432.5 402.1 L434.5 401.8 L436.5 401.4 L438.4 401.0 L440.4 400.6 L442.3 400.0 L444.2 399.5 L446.1 398.9 L448.0 398.2 L449.9 397.5 L451.8 396.8 L453.6 396.0 L455.5 395.2 L457.3 394.4 L459.1 393.6 L461.0 392.7 L462.8 391.8 L464.6 390.9 L466.4 390.0 L468.2 389.1 L470.0 388.2 L471.8 387.2 L473.5 386.2 L475.3 385.3 L477.1 384.3 L478.8 383.3 L480.6 382.3 L482.3 381.2 L484.0 380.2 L485.8 379.1 L487.5 378.1 L489.2 377.0 L490.9 376.0 L492.6 374.9 L494.3 373.8 L496.0 372.7 L497.7 371.6 L499.4 370.5 L501.1 369.4 L502.8 368.3 L504.5 367.2 L506.2 366.1 L507.9 365.0 L509.6 363.9 L511.3 362.8 L513.0 361.7 L514.7 360.6 L516.4 359.5 L518.1 358.4 L519.8 357.3 L521.5 356.2 L523.2 355.1 L524.9 354.0 L526.5 352.8 L528.2 351.7 L529.9 350.6 L531.6 349.5 L533.3 348.4 L535.0 347.3 L536.7 346.2 L538.3 345.0 L540.0 343.9 L541.7 342.8 L543.4 341.6 L545.0 340.5 L546.7 339.3 L548.4 338.2 L550.0 337.0 L551.7 335.9 L553.3 334.7 L555.0 333.5 L556.6 332.4 L558.3 331.2 L559.9 330.0 L561.5 328.8 L563.1 327.6 L564.7 326.3 L566.3 325.1 L567.9 323.9 L569.5 322.6 L571.1 321.3 L572.7 320.1 L574.2 318.8 L575.8 317.5 L577.3 316.2 L578.9 315.0 L580.5 313.7 L582.0 312.4 L583.6 311.1 L585.1 309.8 L586.7 308.6 L588.3 307.3 L589.9 306.0 L591.5 304.8 L593.1 303.6 L594.7 302.3 L596.3 301.1 L597.9 299.9 L599.5 298.7 L601.1 297.4 L602.7 296.2 L604.4 295.0 L606.0 293.8 L607.6 292.6 L609.2 291.4 L610.8 290.2 L612.5 289.0 L614.1 287.8 L615.7 286.6 L617.3 285.3 L618.9 284.1 L620.6 282.9 L622.2 281.7 L623.8 280.5 L625.4 279.3 L627.1 278.1 L628.7 276.9 L630.3 275.7 L632.0 274.6 L633.6 273.4 L635.3 272.2 L636.9 271.0 L638.5 269.8 L640.2 268.7 L641.8 267.5 L643.5 266.3 L645.1 265.1 L646.8 264.0 L648.4 262.8 L650.1 261.6 L651.7 260.5 L653.4 259.3 L655.0 258.1 L656.7 257.0 L658.3 255.8 L660.0 254.6 L661.7 253.5 L663.3 252.4 L665.0 251.2 L666.7 250.1 L668.4 249.0 L670.1 247.9 L671.8 246.8 L673.5 245.7 L675.2 244.7 L676.9 243.6 L678.7 242.6 L680.4 241.6 L682.2 240.6 L683.9 239.6 L685.7 238.6 L687.5 237.7 L689.3 236.7 L691.1 235.8 L692.9 234.9 L694.7 234.0 L696.5 233.1 L698.3 232.2 L700.1 231.3 L701.9 230.5 L703.8 229.6 L705.6 228.8 L707.5 228.0 L709.3 227.1 L711.2 226.3 L713.0 225.6 L714.9 224.8 L716.8 224.0 L718.6 223.3 L720.5 222.5 L722.4 221.8 L724.3 221.1 L726.2 220.4 L728.1 219.7 L730.0 219.1 L731.9 218.4 L733.8 217.8 L735.8 217.2 L737.7 216.5 L739.6 215.9 L741.5 215.3 L743.5 214.8 L745.4 214.2 L747.4 213.6 L749.3 213.1 L751.3 212.6 L753.2 212.0 L755.2 211.5 L757.1 211.0 L759.1 210.5 L761.0 210.1 L763.0 209.6 L765.0 209.1 L766.9 208.7 L768.9 208.2 L770.9 207.7 L772.9 207.3 L774.8 206.9 L776.8 206.4 L778.8 206.0 L780.8 205.6 L782.7 205.2 L784.7 204.8 L786.7 204.4 L788.7 204.0 L790.7 203.6 L792.7 203.2 L794.6 202.9 L796.6 202.5 L798.6 202.2 L800.6 201.9 L802.6 201.6 L804.6 201.3 L806.6 201.0 L808.6 200.7 L810.6 200.4 L812.6 200.1 L814.6 199.9 L816.6 199.6 L818.6 199.4 L820.7 199.1 L822.7 198.9 L824.7 198.7 L826.7 198.4 L828.7 198.2 L830.7 198.0 L832.7 197.8 L834.7 197.6 L836.7 197.4 L838.7 197.2 L840.8 197.0 L842.8 196.9 L844.8 196.7 L846.8 196.5 L848.8 196.4 L850.8 196.2 L852.9 196.0 L854.9 195.9 L856.9 195.7 L858.9 195.6 L861.5 195.6 L864.2 196.0 L866.9 196.7 L869.6 197.9 L872.3 199.4 L875.1 201.3 L877.8 203.5 L880.5 206.0 L883.1 208.9 L885.7 212.1 L888.1 215.5 L890.5 219.2 L892.7 223.1 L894.8 227.3 L896.7 231.6 L898.5 236.1 L900.1 240.7 L901.5 245.3 L902.7 250.1 L903.8 254.9 L904.6 259.6 L905.2 264.4 L905.5 269.1 L905.7 273.7 L905.6 278.1 L905.3 282.4 L904.8 286.6 L904.1 290.5 L903.2 294.2 L902.1 297.7 L900.7 300.8 L899.2 303.7 L897.5 306.3 L895.6 308.5 L893.6 310.4 L891.4 311.9 L889.1 313.0 L886.7 313.8 L884.2 314.2 L881.8 314.1 L879.5 313.9 L877.1 313.8 L874.7 313.7 L872.3 313.7 L870.0 313.6 L867.6 313.7 L865.2 313.7 L862.8 313.8 L860.5 313.9 L858.1 314.0 L855.7 314.2 L853.3 314.3 L851.0 314.5 L848.6 314.7 L846.2 315.0 L843.9 315.2 L841.5 315.5 L839.1 315.7 L836.8 316.0 L834.4 316.3 L832.0 316.7 L829.7 317.0 L827.3 317.4 L825.0 317.7 L822.6 318.1 L820.3 318.5 L817.9 319.0 L815.6 319.4 L813.3 319.9 L810.9 320.4 L808.6 321.0 L806.3 321.6 L804.0 322.2 L801.7 322.8 L799.4 323.5 L797.2 324.2 L794.9 324.9 L792.7 325.7 L790.4 326.5 L788.2 327.3 L786.0 328.2 L783.8 329.1 L781.6 330.0 L779.4 330.9 L777.2 331.9 L775.0 332.9 L772.9 333.9 L770.7 334.9 L768.6 336.0 L766.5 337.0 L764.4 338.1 L762.3 339.2 L760.2 340.4 L758.1 341.6 L756.0 342.7 L754.0 344.0 L752.0 345.2 L749.9 346.5 L748.0 347.8 L746.0 349.1 L744.0 350.4 L742.1 351.8 L740.2 353.2 L738.3 354.6 L736.4 356.1 L734.5 357.6 L732.7 359.1 L730.9 360.6 L729.1 362.2 L727.3 363.8 L725.6 365.4 L723.9 367.1 L722.2 368.8 L720.6 370.5 L719.0 372.2 L717.4 374.0 L715.8 375.8 L714.3 377.6 L712.8 379.4 L711.3 381.3 L709.8 383.2 L708.3 385.0 L706.9 386.9 L705.4 388.8 L704.0 390.7 L702.6 392.6 L701.2 394.6 L699.8 396.5 L698.4 398.4 L697.0 400.3 L695.6 402.3 L694.2 404.2 L692.8 406.2 L691.4 408.1 L690.0 410.0 L688.6 412.0 L687.2 413.9 L685.8 415.8 L684.4 417.7 L683.0 419.6 L681.5 421.5 L680.1 423.4 L678.6 425.3 L677.1 427.2 L675.6 429.0 L674.1 430.9 L672.6 432.7 L671.0 434.5 L669.5 436.3 L667.9 438.1 L666.3 439.8 L664.7 441.6 L663.1 443.3 L661.4 445.1 L659.8 446.8 L658.1 448.5 L656.5 450.2 L654.8 452.0 L653.2 453.7 L651.5 455.4 L649.8 457.1 L648.2 458.8 L646.5 460.5 L644.8 462.2 L643.1 463.9 L641.5 465.6 L639.8 467.2 L638.1 468.9 L636.4 470.6 L634.7 472.3 L633.0 474.0 L631.3 475.6 L629.6 477.3 L627.9 479.0 L626.2 480.6 L624.4 482.2 L622.7 483.9 L620.9 485.5 L619.2 487.1 L617.4 488.6 L615.6 490.2 L613.7 491.7 L611.9 493.2 L610.0 494.7 L608.2 496.2 L606.3 497.7 L604.4 499.1 L602.5 500.5 L600.6 501.9 L598.6 503.3 L596.7 504.7 L594.7 506.1 L592.8 507.4 L590.8 508.8 L588.8 510.1 L586.8 511.4 L584.8 512.7 L582.8 514.0 L580.8 515.2 L578.8 516.5 L576.8 517.8 L574.8 519.0 L572.7 520.3 L570.7 521.5 L568.7 522.8 L566.6 524.0 L564.6 525.3 L562.6 526.6 L560.6 527.9 L558.6 529.1 L556.6 530.4 L554.6 531.7 L552.6 533.0 L550.6 534.3 L548.6 535.7 L546.6 537.0 L544.6 538.3 L542.6 539.6 L540.6 540.9 L538.7 542.2 L536.7 543.5 L534.6 544.8 L532.6 546.1 L530.6 547.3 L528.6 548.6 L526.5 549.8 L524.5 551.0 L522.4 552.2 L520.3 553.4 L518.3 554.5 L516.2 555.6 L514.1 556.8 L511.9 557.9 L509.8 558.9 L507.7 560.0 L505.5 561.0 L503.4 562.0 L501.2 563.0 L499.0 564.0 L496.9 564.9 L494.7 565.9 L492.5 566.8 L490.2 567.7 L488.0 568.5 L485.8 569.3 L483.6 570.2 L481.3 570.9 L479.1 571.7 L476.8 572.4 L474.5 573.2 L472.2 573.8 L470.0 574.5 L467.7 575.2 L465.4 575.8 L463.1 576.4 L460.7 576.9 L458.4 577.5 L456.1 578.0 L453.8 578.5 L451.4 579.0 L449.1 579.5 L446.8 579.9 L444.4 580.3 L442.1 580.7 L439.7 581.1 L437.4 581.4 L435.0 581.8 L432.6 582.1 L430.3 582.3 L427.9 582.6 L425.5 582.8 L423.2 583.0 L420.8 583.1 L418.4 583.2 L416.0 583.3 L413.7 583.4 L411.3 583.4 L408.9 583.4 L406.5 583.3 L404.2 583.3 L401.8 583.2 L399.4 583.1 L397.0 583.0 L394.6 582.8 L392.3 582.6 L389.9 582.4 L387.5 582.2 L385.1 582.0 L382.8 581.8 L380.4 581.5 L378.0 581.2 L375.7 580.9 L373.3 580.6 L371.0 580.3 L368.6 579.9 L366.2 579.5 L363.9 579.2 L361.5 578.8 L359.2 578.3 L356.9 577.9 L354.5 577.4 L352.2 576.9 L349.9 576.4 L347.5 575.9 L345.2 575.4 L342.9 574.8 L340.6 574.3 L338.3 573.7 L336.0 573.1 L333.7 572.5 L331.4 571.9 L329.0 571.3 L326.7 570.6 L324.4 570.0 L322.2 569.4 L319.9 568.7 L317.6 568.1 L315.3 567.5 L313.0 566.8 L310.7 566.2 L308.4 565.5 L306.1 564.9 L303.8 564.2 L301.5 563.6 L299.2 562.9 L296.9 562.2 L294.6 561.6 L292.3 560.9 L290.1 560.2 L287.8 559.6 L285.5 558.9 L283.2 558.2 L280.9 557.5 L278.6 556.8 L276.3 556.1 L274.1 555.5 L271.8 554.8 L269.5 554.1 L275.2 555.3 L281.0 555.7 L286.8 555.2 L292.7 553.8 L298.5 551.5 L304.1 548.4 L309.6 544.4 L314.9 539.7 L319.9 534.2 L324.6 528.0 L328.9 521.2 L332.9 513.8 L336.4 506.0 L339.4 497.7 L341.9 489.1 L343.9 480.2 L345.3 471.1 L346.2 461.9 L346.6 452.7 L346.3 443.6 L345.5 434.7 L344.1 426.0 L342.2 417.6 L339.8 409.7 L336.9 402.2 L333.4 395.3 L329.6 389.0 L325.3 383.4 L320.7 378.5Z" fill="#0e8a8a"/>
<g clip-path="url(#pc)"><path d="M315.7 374.4 L323.2 379.4 L329.9 386.6 L335.6 395.8 L340.2 406.8 L343.6 419.3 L345.6 432.9 L346.3 447.3 L345.6 462.2 L343.5 477.2 L340.1 491.8 L335.4 505.7 L329.7 518.5 L323.0 529.9 L315.5 539.6 L307.4 547.4 L299.0 553.0 L290.3 556.3 L281.8 557.2 L273.5 555.7 L269.5 554.1 M328.4 378.6 L335.5 384.1 L341.7 391.7 L346.8 401.2 L350.7 412.4 L353.2 425.0 L354.4 438.7 L354.2 453.1 L352.6 467.9 L349.5 482.6 L345.3 496.9 L339.8 510.5 L333.3 522.9 L325.9 533.8 L317.8 543.0 L309.3 550.2 L300.5 555.3 L291.7 558.0 L283.2 558.4 L275.0 556.5 L271.2 554.6 M335.1 380.9 L342.2 386.3 L348.4 393.8 L353.6 403.3 L357.5 414.4 L360.1 427.0 L361.4 440.7 L361.2 455.1 L359.7 469.8 L356.7 484.5 L352.5 498.9 L347.1 512.4 L340.7 524.8 L333.4 535.8 L325.4 545.0 L316.9 552.3 L308.2 557.4 L299.4 560.2 L290.9 560.7 L282.7 558.7 L278.9 556.9 M341.7 383.1 L348.8 388.4 L355.1 395.9 L360.3 405.3 L364.3 416.4 L367.0 428.9 L368.3 442.6 L368.2 456.9 L366.8 471.7 L363.9 486.4 L359.8 500.7 L354.5 514.3 L348.2 526.7 L340.9 537.7 L333.0 547.0 L324.6 554.3 L315.9 559.5 L307.2 562.4 L298.7 562.9 L290.5 561.0 L286.7 559.2 M348.4 385.3 L355.6 390.6 L361.9 398.0 L367.1 407.4 L371.1 418.4 L373.9 430.9 L375.3 444.5 L375.3 458.9 L373.9 473.6 L371.1 488.3 L367.1 502.7 L361.8 516.2 L355.6 528.7 L348.4 539.7 L340.5 549.0 L332.2 556.4 L323.5 561.6 L314.8 564.5 L306.3 565.1 L298.2 563.3 L294.3 561.5 M355.3 387.5 L362.4 392.7 L368.7 400.1 L374.0 409.4 L378.1 420.5 L380.8 432.9 L382.3 446.5 L382.3 460.8 L381.0 475.5 L378.3 490.2 L374.3 504.6 L369.1 518.1 L362.9 530.6 L355.8 541.7 L348.0 551.0 L339.7 558.4 L331.1 563.6 L322.4 566.6 L313.9 567.2 L305.8 565.4 L301.9 563.7 M362.0 389.7 L369.2 394.8 L375.5 402.1 L380.8 411.4 L384.9 422.4 L387.8 434.8 L389.3 448.4 L389.4 462.7 L388.1 477.4 L385.5 492.1 L381.6 506.4 L376.5 520.0 L370.4 532.5 L363.3 543.6 L355.6 552.9 L347.3 560.4 L338.8 565.7 L330.1 568.7 L321.6 569.3 L313.5 567.6 L309.7 565.9 M368.9 391.8 L376.1 396.9 L382.4 404.2 L387.7 413.4 L391.9 424.4 L394.8 436.8 L396.3 450.3 L396.5 464.6 L395.3 479.2 L392.7 493.9 L388.9 508.3 L383.8 521.8 L377.8 534.4 L370.8 545.5 L363.1 554.9 L354.8 562.3 L346.3 567.6 L337.7 570.7 L329.2 571.4 L321.1 569.7 L317.3 568.0 M375.3 393.7 L382.5 398.8 L388.9 406.0 L394.3 415.1 L398.6 426.0 L401.5 438.4 L403.2 451.9 L403.5 466.1 L402.4 480.8 L400.0 495.5 L396.3 509.8 L391.4 523.5 L385.4 536.0 L378.6 547.2 L370.9 556.6 L362.8 564.2 L354.3 569.6 L345.8 572.7 L337.3 573.5 L329.2 571.9 L325.4 570.3 M381.4 395.5 L388.7 400.5 L395.2 407.6 L400.7 416.6 L405.0 427.5 L408.2 439.7 L410.0 453.2 L410.5 467.4 L409.6 482.1 L407.4 496.8 L403.9 511.2 L399.1 524.8 L393.3 537.5 L386.6 548.7 L379.1 558.3 L371.1 565.9 L362.7 571.4 L354.2 574.7 L345.8 575.6 L337.7 574.1 L333.8 572.5 M387.6 397.2 L394.9 402.1 L401.4 409.1 L407.0 418.0 L411.5 428.8 L414.8 441.0 L416.8 454.4 L417.5 468.6 L416.8 483.3 L414.8 498.0 L411.4 512.4 L406.9 526.1 L401.3 538.8 L394.7 550.1 L387.3 559.8 L379.4 567.5 L371.1 573.2 L362.7 576.5 L354.3 577.6 L346.2 576.2 L342.3 574.7 M392.3 398.5 L399.7 403.1 L406.5 409.8 L412.4 418.6 L417.2 429.2 L420.9 441.2 L423.3 454.5 L424.5 468.7 L424.2 483.3 L422.7 498.1 L419.8 512.6 L415.7 526.5 L410.5 539.3 L404.4 550.8 L397.4 560.7 L389.7 568.7 L381.6 574.6 L373.3 578.3 L364.9 579.6 L356.8 578.5 L352.9 577.1 M397.1 399.7 L404.6 404.0 L411.6 410.5 L417.7 419.1 L422.8 429.5 L426.8 441.5 L429.6 454.6 L431.2 468.7 L431.4 483.4 L430.2 498.1 L427.8 512.7 L424.1 526.6 L419.3 539.6 L413.5 551.3 L406.8 561.3 L399.4 569.5 L391.5 575.7 L383.3 579.5 L375.0 581.1 L366.8 580.3 L362.9 579.0 M401.6 400.7 L409.3 404.7 L416.4 411.0 L422.8 419.4 L428.2 429.6 L432.6 441.4 L435.8 454.4 L437.8 468.4 L438.4 483.0 L437.8 497.8 L435.8 512.3 L432.6 526.4 L428.2 539.5 L422.7 551.3 L416.4 561.5 L409.3 570.0 L401.6 576.3 L393.5 580.5 L385.3 582.3 L377.2 581.7 L373.2 580.6 M406.1 401.5 L413.9 405.3 L421.2 411.3 L427.8 419.4 L433.5 429.4 L438.3 441.0 L441.9 453.9 L444.3 467.8 L445.5 482.3 L445.3 497.1 L443.8 511.7 L441.1 525.8 L437.1 539.0 L432.1 550.9 L426.1 561.4 L419.3 570.0 L411.8 576.6 L404.0 581.1 L395.8 583.1 L387.7 582.9 L383.7 581.9 M408.9 402.0 L416.9 405.3 L424.4 411.0 L431.4 418.7 L437.7 428.3 L443.0 439.6 L447.3 452.3 L450.4 466.0 L452.3 480.4 L452.9 495.1 L452.1 509.8 L450.1 524.0 L446.9 537.3 L442.5 549.5 L437.0 560.3 L430.7 569.2 L423.6 576.2 L416.0 581.0 L408.1 583.5 L399.9 583.7 L395.9 582.9 M412.8 402.4 L420.9 405.5 L428.6 410.8 L435.9 418.2 L442.5 427.6 L448.3 438.6 L453.1 451.1 L456.7 464.6 L459.1 478.9 L460.3 493.5 L460.2 508.1 L458.7 522.4 L456.0 535.8 L452.1 548.2 L447.2 559.1 L441.2 568.3 L434.4 575.6 L427.0 580.7 L419.2 583.5 L411.1 584.0 L407.1 583.3 M415.5 402.7 L423.7 405.3 L431.7 410.1 L439.4 417.1 L446.4 426.1 L452.7 436.8 L458.2 448.9 L462.5 462.2 L465.7 476.3 L467.6 490.8 L468.3 505.4 L467.6 519.6 L465.7 533.2 L462.4 545.7 L458.1 556.8 L452.6 566.3 L446.3 573.9 L439.2 579.4 L431.6 582.7 L423.5 583.6 L419.5 583.2 M417.3 402.8 L425.5 404.8 L433.8 409.1 L441.8 415.6 L449.5 424.0 L456.4 434.3 L462.6 446.0 L467.8 458.9 L471.8 472.7 L474.7 487.0 L476.3 501.5 L476.6 515.7 L475.5 529.3 L473.1 541.9 L469.5 553.3 L464.7 563.1 L458.9 571.1 L452.2 577.0 L444.8 580.7 L436.9 582.2 L432.8 582.0 M420.5 402.9 L428.9 404.5 L437.3 408.3 L445.6 414.3 L453.6 422.3 L461.0 432.1 L467.7 443.5 L473.5 456.0 L478.3 469.5 L481.9 483.6 L484.2 497.9 L485.2 512.0 L484.8 525.5 L483.1 538.2 L480.1 549.7 L475.8 559.7 L470.5 567.9 L464.2 574.2 L457.0 578.3 L449.3 580.1 L445.2 580.2 M424.7 402.9 L433.0 404.1 L441.5 407.6 L450.0 413.2 L458.2 420.9 L466.0 430.3 L473.1 441.3 L479.3 453.6 L484.6 466.8 L488.7 480.6 L491.5 494.7 L493.0 508.7 L493.2 522.2 L492.0 534.9 L489.4 546.4 L485.6 556.5 L480.6 564.9 L474.6 571.3 L467.7 575.7 L460.0 577.8 L456.0 578.0 M427.6 402.7 L435.9 403.5 L444.6 406.5 L453.3 411.7 L461.8 418.8 L470.0 427.8 L477.7 438.3 L484.5 450.2 L490.4 463.0 L495.2 476.6 L498.7 490.4 L501.0 504.2 L501.9 517.6 L501.3 530.3 L499.4 541.9 L496.1 552.1 L491.6 560.7 L485.9 567.4 L479.3 572.1 L471.8 574.7 L467.9 575.1 M430.4 402.4 L438.7 402.8 L447.4 405.3 L456.3 409.9 L465.2 416.5 L473.8 425.0 L481.9 435.1 L489.4 446.5 L495.9 458.9 L501.4 472.1 L505.7 485.7 L508.7 499.3 L510.3 512.5 L510.5 525.1 L509.2 536.8 L506.5 547.1 L502.5 555.9 L497.2 562.9 L490.9 567.9 L483.6 570.8 L479.7 571.5 M434.3 401.8 L442.5 401.8 L451.3 404.0 L460.3 408.2 L469.4 414.4 L478.3 422.5 L486.8 432.1 L494.6 443.1 L501.7 455.2 L507.6 468.1 L512.5 481.4 L516.0 494.7 L518.1 507.8 L518.8 520.4 L518.0 532.0 L515.8 542.3 L512.2 551.2 L507.3 558.4 L501.2 563.6 L494.1 566.8 L490.2 567.7 M438.3 401.1 L446.4 400.7 L455.2 402.4 L464.3 406.2 L473.6 412.0 L482.8 419.5 L491.6 428.7 L499.9 439.3 L507.4 451.0 L513.9 463.5 L519.3 476.4 L523.3 489.6 L526.0 502.5 L527.3 514.9 L527.0 526.4 L525.3 536.8 L522.1 545.8 L517.5 553.1 L511.7 558.6 L504.9 562.1 L501.1 563.1 M441.7 400.2 L449.8 399.4 L458.6 400.7 L467.8 404.1 L477.3 409.4 L486.7 416.5 L495.9 425.2 L504.6 435.3 L512.6 446.5 L519.6 458.6 L525.5 471.2 L530.2 484.1 L533.4 496.8 L535.2 509.0 L535.5 520.5 L534.3 530.9 L531.5 539.9 L527.4 547.4 L521.9 553.1 L515.2 556.9 L511.5 558.1 M446.4 398.8 L454.4 397.7 L463.1 398.8 L472.4 401.8 L481.9 406.7 L491.5 413.5 L500.9 421.8 L509.8 431.6 L518.1 442.5 L525.4 454.3 L531.7 466.6 L536.7 479.2 L540.4 491.7 L542.5 503.8 L543.2 515.1 L542.3 525.5 L539.8 534.6 L536.0 542.1 L530.7 548.0 L524.3 552.0 L520.6 553.2 M450.5 397.3 L458.3 396.0 L467.0 396.7 L476.3 399.3 L486.0 403.8 L495.7 410.2 L505.3 418.1 L514.6 427.4 L523.2 437.9 L530.9 449.3 L537.6 461.3 L543.1 473.6 L547.2 485.9 L549.8 497.8 L550.8 509.1 L550.4 519.4 L548.3 528.5 L544.8 536.1 L539.8 542.1 L533.5 546.3 L530.0 547.7 M456.2 394.9 L464.0 393.4 L472.6 393.9 L481.9 396.4 L491.5 400.7 L501.3 406.8 L511.0 414.5 L520.4 423.5 L529.1 433.8 L537.0 445.0 L543.9 456.7 L549.5 468.8 L553.8 480.9 L556.7 492.7 L558.0 503.8 L557.7 514.1 L555.8 523.2 L552.5 530.8 L547.7 536.9 L541.5 541.2 L538.0 542.6 M461.4 392.5 L469.1 390.9 L477.6 391.2 L486.9 393.4 L496.6 397.5 L506.4 403.3 L516.2 410.7 L525.7 419.5 L534.6 429.5 L542.7 440.4 L549.8 452.0 L555.6 463.9 L560.2 475.8 L563.3 487.4 L564.8 498.5 L564.8 508.6 L563.1 517.7 L560.0 525.4 L555.4 531.5 L549.4 535.9 L546.0 537.4 M467.7 389.4 L475.3 387.7 L483.8 388.0 L493.0 390.1 L502.6 394.1 L512.5 399.8 L522.2 407.1 L531.7 415.8 L540.6 425.7 L548.7 436.5 L555.9 447.9 L561.8 459.7 L566.4 471.5 L569.6 483.1 L571.2 494.0 L571.2 504.2 L569.7 513.2 L566.6 520.9 L562.0 527.0 L556.1 531.4 L552.7 532.9 M474.4 385.8 L482.0 384.1 L490.4 384.3 L499.6 386.4 L509.2 390.3 L519.0 396.0 L528.8 403.2 L538.2 411.9 L547.1 421.7 L555.2 432.4 L562.4 443.8 L568.3 455.5 L572.9 467.3 L576.1 478.8 L577.8 489.7 L577.8 499.8 L576.3 508.8 L573.3 516.4 L568.8 522.5 L562.9 527.0 L559.6 528.5 M480.4 382.4 L487.9 380.6 L496.3 380.8 L505.5 382.8 L515.1 386.6 L524.9 392.2 L534.7 399.3 L544.2 407.9 L553.2 417.6 L561.4 428.2 L568.6 439.5 L574.6 451.2 L579.3 462.9 L582.6 474.3 L584.3 485.2 L584.5 495.3 L583.1 504.3 L580.1 512.0 L575.7 518.1 L569.9 522.6 L566.5 524.1 M486.5 378.7 L494.0 376.9 L502.4 377.0 L511.5 379.0 L521.1 382.8 L531.0 388.3 L540.8 395.4 L550.3 403.9 L559.3 413.5 L567.6 424.1 L574.8 435.4 L580.9 447.0 L585.7 458.6 L589.1 470.1 L590.9 480.9 L591.1 491.0 L589.7 500.0 L586.8 507.7 L582.4 513.8 L576.7 518.3 L573.3 519.9 M492.4 375.0 L499.9 373.1 L508.3 373.1 L517.5 375.0 L527.1 378.7 L537.0 384.1 L546.9 391.1 L556.5 399.5 L565.6 409.0 L573.9 419.6 L581.3 430.7 L587.5 442.3 L592.4 453.9 L595.9 465.3 L597.8 476.1 L598.1 486.2 L596.9 495.2 L594.1 502.9 L589.7 509.1 L584.1 513.7 L580.7 515.3 M497.6 371.7 L505.0 369.7 L513.4 369.6 L522.6 371.3 L532.3 374.8 L542.3 380.0 L552.2 386.8 L562.0 395.1 L571.3 404.5 L579.8 414.8 L587.3 425.9 L593.8 437.3 L598.9 448.8 L602.5 460.1 L604.6 471.0 L605.1 481.0 L604.1 490.1 L601.4 497.8 L597.2 504.1 L591.6 508.7 L588.3 510.4 M502.9 368.3 L510.3 366.1 L518.7 365.8 L527.9 367.4 L537.6 370.7 L547.6 375.7 L557.7 382.4 L567.6 390.4 L577.0 399.6 L585.7 409.8 L593.5 420.7 L600.1 432.0 L605.4 443.4 L609.3 454.6 L611.6 465.4 L612.3 475.5 L611.4 484.5 L608.9 492.3 L604.8 498.7 L599.3 503.4 L596.1 505.1 M507.7 365.2 L515.0 362.9 L523.3 362.4 L532.5 363.7 L542.3 366.8 L552.4 371.6 L562.6 378.0 L572.7 385.8 L582.3 394.8 L591.2 404.7 L599.2 415.4 L606.0 426.5 L611.6 437.8 L615.7 448.9 L618.3 459.6 L619.2 469.6 L618.5 478.7 L616.2 486.5 L612.3 492.9 L606.9 497.8 L603.7 499.6 M512.9 361.7 L520.2 359.3 L528.4 358.7 L537.6 359.8 L547.4 362.7 L557.6 367.3 L567.9 373.4 L578.0 381.0 L587.7 389.7 L596.8 399.5 L605.0 410.0 L612.0 420.9 L617.8 432.0 L622.1 443.1 L624.9 453.7 L626.0 463.6 L625.5 472.6 L623.3 480.5 L619.6 487.0 L614.3 491.9 L611.2 493.8 M518.0 358.5 L525.1 355.9 L533.3 355.1 L542.4 356.1 L552.2 358.7 L562.4 363.1 L572.7 369.0 L583.0 376.3 L592.8 384.9 L602.0 394.4 L610.3 404.7 L617.6 415.4 L623.5 426.4 L628.0 437.2 L631.0 447.7 L632.3 457.6 L632.0 466.6 L630.0 474.4 L626.4 481.0 L621.3 486.0 L618.2 487.9 M523.0 355.2 L530.0 352.5 L538.1 351.6 L547.2 352.3 L556.9 354.8 L567.1 358.9 L577.5 364.6 L587.8 371.7 L597.7 379.9 L607.0 389.2 L615.5 399.2 L622.9 409.8 L629.0 420.5 L633.7 431.2 L636.8 441.6 L638.4 451.4 L638.2 460.3 L636.4 468.1 L633.0 474.7 L628.0 479.8 L625.0 481.7 M529.2 351.1 L536.1 348.4 L544.2 347.4 L553.1 348.1 L562.8 350.5 L572.9 354.6 L583.3 360.1 L593.5 367.1 L603.4 375.2 L612.6 384.3 L621.1 394.2 L628.5 404.6 L634.6 415.3 L639.3 425.8 L642.5 436.1 L644.1 445.8 L644.0 454.6 L642.2 462.4 L638.9 468.9 L634.0 474.0 L631.0 475.9 M535.1 347.2 L541.9 344.5 L549.8 343.5 L558.7 344.1 L568.3 346.4 L578.4 350.3 L588.6 355.8 L598.8 362.6 L608.7 370.6 L617.9 379.6 L626.3 389.3 L633.7 399.6 L639.9 410.1 L644.6 420.5 L647.8 430.7 L649.5 440.2 L649.5 449.0 L647.8 456.7 L644.5 463.2 L639.7 468.2 L636.8 470.2 M540.9 343.3 L547.6 340.5 L555.5 339.4 L564.3 339.9 L573.8 342.1 L583.8 345.9 L594.0 351.2 L604.2 357.8 L614.0 365.6 L623.3 374.4 L631.7 384.0 L639.1 394.1 L645.3 404.4 L650.1 414.7 L653.5 424.7 L655.2 434.2 L655.3 442.8 L653.7 450.5 L650.5 457.0 L645.9 462.0 L643.0 464.0 M546.7 339.4 L553.3 336.6 L561.0 335.4 L569.8 335.9 L579.2 338.0 L589.1 341.6 L599.3 346.8 L609.4 353.2 L619.2 360.9 L628.4 369.6 L636.9 379.0 L644.3 388.9 L650.5 399.1 L655.4 409.2 L658.8 419.1 L660.6 428.5 L660.7 437.1 L659.3 444.7 L656.2 451.1 L651.6 456.1 L648.8 458.1 M552.1 335.6 L558.6 332.7 L566.3 331.4 L574.9 331.7 L584.3 333.6 L594.1 337.1 L604.3 342.0 L614.4 348.3 L624.2 355.7 L633.5 364.1 L642.0 373.3 L649.6 383.0 L655.9 393.0 L660.9 403.0 L664.4 412.7 L666.4 422.0 L666.7 430.5 L665.3 438.0 L662.4 444.4 L658.0 449.5 L655.2 451.5 M557.5 331.7 L563.9 328.8 L571.4 327.4 L580.0 327.5 L589.3 329.3 L599.1 332.5 L609.2 337.2 L619.4 343.3 L629.2 350.5 L638.6 358.7 L647.2 367.6 L654.8 377.1 L661.2 386.9 L666.4 396.7 L670.0 406.3 L672.1 415.4 L672.5 423.9 L671.4 431.4 L668.6 437.8 L664.3 442.9 L661.6 444.9 M562.3 328.2 L568.6 325.1 L576.0 323.5 L584.5 323.5 L593.7 325.1 L603.6 328.1 L613.7 332.6 L623.8 338.3 L633.7 345.3 L643.1 353.2 L651.9 361.9 L659.6 371.1 L666.2 380.7 L671.5 390.3 L675.3 399.7 L677.5 408.7 L678.2 417.1 L677.2 424.5 L674.6 430.9 L670.4 436.1 L667.8 438.2 M566.9 324.7 L572.9 321.5 L580.3 319.7 L588.6 319.5 L597.8 320.7 L607.6 323.4 L617.7 327.6 L627.9 333.0 L637.9 339.6 L647.5 347.1 L656.4 355.5 L664.3 364.4 L671.1 373.7 L676.6 383.0 L680.7 392.2 L683.2 401.1 L684.0 409.3 L683.3 416.7 L680.9 423.1 L676.9 428.4 L674.4 430.5 M572.3 320.4 L578.2 317.2 L585.4 315.4 L593.7 315.0 L602.8 316.2 L612.5 318.8 L622.5 322.8 L632.7 328.0 L642.6 334.4 L652.1 341.8 L661.0 350.0 L668.9 358.7 L675.8 367.8 L681.3 377.0 L685.4 386.1 L687.9 394.8 L688.9 403.0 L688.2 410.3 L685.9 416.7 L682.1 421.9 L679.6 424.0 M578.3 315.5 L584.2 312.3 L591.3 310.5 L599.4 310.1 L608.4 311.2 L618.0 313.8 L627.9 317.7 L637.9 322.9 L647.7 329.2 L657.2 336.5 L665.9 344.5 L673.8 353.1 L680.5 362.1 L686.0 371.2 L690.1 380.2 L692.6 388.8 L693.6 396.8 L692.9 404.1 L690.7 410.3 L686.9 415.5 L684.5 417.6 M584.5 310.4 L590.3 307.2 L597.3 305.5 L605.3 305.1 L614.1 306.2 L623.6 308.8 L633.3 312.6 L643.2 317.7 L652.9 324.0 L662.2 331.2 L670.8 339.1 L678.6 347.6 L685.2 356.5 L690.6 365.4 L694.6 374.3 L697.2 382.8 L698.1 390.7 L697.5 397.9 L695.3 404.1 L691.6 409.1 L689.2 411.2 M591.3 305.0 L597.0 301.9 L603.9 300.3 L611.8 300.1 L620.5 301.3 L629.8 303.9 L639.4 307.9 L649.0 313.1 L658.5 319.4 L667.5 326.6 L675.9 334.6 L683.4 343.1 L689.8 351.9 L695.1 360.8 L698.9 369.6 L701.2 378.0 L702.1 385.8 L701.4 392.9 L699.1 398.9 L695.4 403.9 L693.0 405.9 M598.1 299.8 L603.7 296.8 L610.6 295.3 L618.3 295.1 L626.9 296.4 L635.9 299.1 L645.3 303.1 L654.8 308.2 L664.0 314.5 L672.8 321.7 L681.0 329.6 L688.3 338.0 L694.6 346.8 L699.7 355.6 L703.4 364.3 L705.6 372.6 L706.4 380.3 L705.6 387.2 L703.3 393.1 L699.6 398.0 L697.3 399.9 M604.3 295.0 L609.9 292.2 L616.6 290.7 L624.3 290.6 L632.6 291.8 L641.6 294.5 L650.8 298.4 L660.0 303.6 L669.1 309.8 L677.8 316.8 L685.8 324.7 L693.0 333.0 L699.1 341.6 L704.1 350.3 L707.7 358.8 L709.9 367.0 L710.6 374.6 L709.9 381.4 L707.6 387.2 L704.0 392.0 L701.6 393.9 M611.0 290.0 L616.5 287.2 L623.1 285.8 L630.6 285.7 L638.9 287.1 L647.6 289.7 L656.7 293.6 L665.7 298.7 L674.6 304.9 L683.1 311.9 L691.0 319.6 L698.0 327.9 L703.9 336.4 L708.8 345.0 L712.3 353.4 L714.4 361.4 L715.1 368.9 L714.3 375.6 L712.1 381.3 L708.4 386.0 L706.2 387.9 M618.5 284.5 L623.9 281.9 L630.4 280.6 L637.8 280.6 L645.9 282.1 L654.4 284.9 L663.3 288.9 L672.1 294.1 L680.7 300.3 L688.9 307.4 L696.5 315.2 L703.2 323.4 L709.0 331.9 L713.6 340.4 L716.9 348.8 L718.8 356.8 L719.3 364.1 L718.4 370.7 L716.1 376.3 L712.5 380.8 L710.2 382.6 M625.7 279.1 L631.2 276.6 L637.6 275.4 L644.9 275.6 L652.8 277.2 L661.2 280.1 L669.8 284.2 L678.4 289.5 L686.8 295.7 L694.7 302.9 L702.1 310.6 L708.6 318.9 L714.1 327.3 L718.5 335.8 L721.6 344.1 L723.4 352.0 L723.8 359.2 L722.8 365.7 L720.5 371.2 L716.8 375.6 L714.5 377.3 M633.1 273.7 L638.5 271.4 L644.9 270.4 L652.0 270.7 L659.8 272.5 L668.0 275.5 L676.4 279.8 L684.8 285.2 L692.9 291.6 L700.6 298.8 L707.7 306.6 L713.9 314.9 L719.2 323.4 L723.3 331.8 L726.2 340.1 L727.8 347.9 L728.1 355.1 L726.9 361.5 L724.5 366.8 L720.8 371.1 L718.5 372.7 M640.6 268.3 L646.0 266.1 L652.3 265.3 L659.4 265.8 L667.0 267.6 L675.1 270.8 L683.3 275.2 L691.5 280.7 L699.4 287.2 L706.8 294.5 L713.7 302.4 L719.7 310.7 L724.7 319.2 L728.6 327.6 L731.3 335.9 L732.7 343.6 L732.8 350.7 L731.6 357.0 L729.1 362.3 L725.3 366.4 L723.0 368.0 M648.3 262.9 L653.6 260.8 L659.9 260.1 L666.9 260.8 L674.4 262.8 L682.3 266.1 L690.3 270.7 L698.3 276.3 L706.0 282.9 L713.2 290.3 L719.8 298.3 L725.6 306.6 L730.4 315.2 L734.0 323.6 L736.5 331.9 L737.8 339.6 L737.7 346.6 L736.4 352.8 L733.8 358.0 L730.0 362.0 L727.7 363.5 M655.8 257.6 L661.1 255.6 L667.4 255.1 L674.3 255.9 L681.7 258.0 L689.5 261.5 L697.3 266.1 L705.1 271.9 L712.7 278.6 L719.7 286.1 L726.1 294.2 L731.6 302.6 L736.2 311.2 L739.7 319.7 L742.0 327.9 L743.1 335.6 L742.9 342.6 L741.5 348.7 L738.8 353.8 L735.0 357.7 L732.6 359.1 M663.7 252.1 L669.1 250.3 L675.4 249.9 L682.2 251.0 L689.5 253.4 L697.1 257.1 L704.8 262.0 L712.4 268.0 L719.6 274.9 L726.4 282.6 L732.5 290.8 L737.7 299.4 L742.0 308.1 L745.2 316.7 L747.2 324.9 L748.0 332.6 L747.6 339.6 L746.0 345.7 L743.1 350.6 L739.2 354.4 L736.8 355.7 M671.9 246.7 L677.4 245.1 L683.6 244.9 L690.3 246.1 L697.6 248.7 L705.0 252.7 L712.5 257.8 L719.8 264.0 L726.9 271.1 L733.3 279.0 L739.1 287.4 L744.1 296.1 L748.1 304.9 L751.0 313.5 L752.8 321.8 L753.4 329.5 L752.8 336.4 L751.0 342.4 L748.0 347.2 L744.0 350.8 L741.6 352.2 M680.4 241.6 L685.9 240.2 L692.0 240.2 L698.7 241.6 L705.8 244.4 L713.1 248.6 L720.4 253.9 L727.5 260.3 L734.3 267.6 L740.5 275.7 L746.0 284.2 L750.6 293.0 L754.3 301.9 L757.0 310.6 L758.5 318.9 L758.8 326.6 L758.0 333.4 L756.0 339.3 L752.9 344.1 L748.8 347.5 L746.4 348.8 M689.4 236.7 L694.9 235.4 L701.0 235.7 L707.6 237.4 L714.6 240.4 L721.6 244.8 L728.7 250.4 L735.5 257.1 L742.0 264.6 L747.8 272.8 L753.0 281.5 L757.3 290.5 L760.6 299.4 L762.9 308.2 L764.1 316.5 L764.2 324.2 L763.1 331.0 L760.9 336.8 L757.7 341.4 L753.5 344.7 L751.0 345.8 M698.4 232.2 L703.9 231.1 L709.9 231.6 L716.4 233.5 L723.2 236.8 L730.1 241.4 L736.9 247.2 L743.5 254.0 L749.6 261.7 L755.2 270.1 L760.0 278.9 L764.0 288.0 L767.0 297.0 L769.0 305.8 L769.9 314.1 L769.7 321.7 L768.4 328.5 L766.1 334.1 L762.7 338.6 L758.4 341.8 L755.9 342.8 M707.1 228.1 L712.5 227.3 L718.5 227.9 L724.9 230.0 L731.6 233.5 L738.3 238.3 L744.9 244.3 L751.2 251.3 L757.0 259.2 L762.3 267.7 L766.8 276.6 L770.5 285.7 L773.2 294.8 L774.9 303.6 L775.6 311.9 L775.2 319.5 L773.7 326.2 L771.1 331.8 L767.6 336.1 L763.3 339.1 L760.8 340.1 M716.0 224.3 L721.4 223.7 L727.4 224.5 L733.7 226.7 L740.2 230.4 L746.7 235.3 L753.1 241.5 L759.2 248.6 L764.8 256.6 L769.7 265.3 L774.0 274.3 L777.4 283.5 L779.8 292.6 L781.2 301.4 L781.6 309.7 L781.0 317.2 L779.3 323.8 L776.6 329.3 L773.1 333.5 L768.6 336.3 L766.1 337.2 M725.0 220.9 L730.4 220.3 L736.3 221.3 L742.5 223.7 L748.8 227.6 L755.2 232.7 L761.3 239.0 L767.2 246.2 L772.5 254.3 L777.2 263.0 L781.2 272.1 L784.3 281.4 L786.4 290.5 L787.6 299.3 L787.8 307.5 L787.0 315.0 L785.1 321.5 L782.3 326.9 L778.6 331.0 L774.1 333.7 L771.7 334.5 M734.2 217.7 L739.6 217.3 L745.4 218.4 L751.5 221.0 L757.7 225.0 L763.8 230.3 L769.7 236.7 L775.3 244.1 L780.3 252.3 L784.7 261.1 L788.4 270.3 L791.2 279.5 L793.1 288.7 L794.0 297.4 L794.0 305.6 L792.9 313.0 L790.9 319.4 L787.9 324.7 L784.1 328.6 L779.6 331.2 L777.1 331.9 M743.5 214.8 L748.8 214.6 L754.6 215.9 L760.5 218.6 L766.5 222.8 L772.5 228.2 L778.1 234.7 L783.4 242.2 L788.2 250.5 L792.3 259.4 L795.7 268.6 L798.2 277.9 L799.8 287.0 L800.5 295.8 L800.1 303.9 L798.9 311.2 L796.7 317.5 L793.6 322.6 L789.7 326.5 L785.2 328.9 L782.7 329.5 M752.8 212.2 L758.1 212.1 L763.7 213.6 L769.6 216.5 L775.4 220.7 L781.1 226.3 L786.6 233.0 L791.6 240.6 L796.1 249.0 L799.9 257.9 L803.0 267.1 L805.2 276.4 L806.6 285.5 L807.0 294.2 L806.4 302.3 L804.9 309.5 L802.6 315.7 L799.4 320.7 L795.5 324.4 L790.9 326.7 L788.4 327.3 M762.0 209.8 L767.3 209.9 L772.8 211.5 L778.5 214.5 L784.2 219.0 L789.8 224.6 L795.0 231.4 L799.8 239.1 L804.0 247.5 L807.6 256.5 L810.4 265.8 L812.4 275.0 L813.4 284.1 L813.6 292.8 L812.8 300.8 L811.2 308.0 L808.7 314.1 L805.4 318.9 L801.4 322.5 L796.8 324.6 L794.3 325.1 M771.1 207.7 L776.4 207.9 L781.8 209.6 L787.4 212.8 L793.0 217.3 L798.3 223.1 L803.4 229.9 L808.0 237.7 L812.0 246.2 L815.3 255.2 L817.8 264.5 L819.6 273.8 L820.4 282.9 L820.4 291.5 L819.4 299.4 L817.6 306.5 L815.0 312.5 L811.6 317.3 L807.5 320.7 L802.9 322.8 L800.4 323.2 M780.1 205.7 L785.3 206.1 L790.8 207.9 L796.2 211.1 L801.7 215.8 L806.9 221.6 L811.7 228.6 L816.1 236.4 L819.9 245.0 L823.0 254.0 L825.4 263.3 L826.9 272.6 L827.5 281.7 L827.3 290.3 L826.2 298.2 L824.2 305.2 L821.4 311.1 L817.9 315.8 L813.8 319.2 L809.2 321.1 L806.7 321.5 M789.3 203.9 L794.5 204.3 L799.9 206.3 L805.3 209.7 L810.5 214.4 L815.6 220.4 L820.2 227.5 L824.4 235.4 L828.0 244.0 L830.8 253.1 L832.9 262.5 L834.2 271.8 L834.6 280.8 L834.2 289.4 L832.9 297.3 L830.7 304.2 L827.8 310.1 L824.3 314.7 L820.1 317.9 L815.4 319.7 L812.9 320.0 M798.6 202.2 L803.7 202.8 L809.0 204.9 L814.3 208.4 L819.5 213.3 L824.3 219.4 L828.8 226.5 L832.8 234.6 L836.1 243.3 L838.7 252.4 L840.6 261.8 L841.6 271.1 L841.8 280.2 L841.1 288.7 L839.6 296.5 L837.3 303.4 L834.3 309.2 L830.6 313.7 L826.3 316.8 L821.6 318.5 L819.1 318.8 M807.9 200.8 L813.0 201.5 L818.2 203.7 L823.4 207.4 L828.4 212.3 L833.1 218.6 L837.4 225.8 L841.1 233.9 L844.2 242.7 L846.6 251.9 L848.2 261.3 L849.0 270.7 L849.0 279.7 L848.1 288.2 L846.4 296.0 L843.9 302.8 L840.8 308.5 L837.0 312.9 L832.6 315.9 L827.9 317.4 L825.4 317.7 M816.7 199.6 L821.8 200.4 L827.0 202.7 L832.1 206.4 L837.0 211.5 L841.6 217.8 L845.7 225.1 L849.3 233.3 L852.3 242.1 L854.5 251.3 L855.9 260.7 L856.6 270.1 L856.4 279.1 L855.3 287.6 L853.5 295.3 L850.9 302.1 L847.6 307.7 L843.8 312.1 L839.4 315.0 L834.7 316.5 L832.2 316.6 M825.6 198.6 L830.6 199.4 L835.8 201.8 L840.8 205.6 L845.6 210.8 L850.1 217.1 L854.1 224.5 L857.5 232.7 L860.3 241.6 L862.4 250.9 L863.6 260.3 L864.1 269.6 L863.7 278.7 L862.6 287.1 L860.6 294.8 L857.9 301.5 L854.6 307.1 L850.6 311.4 L846.2 314.2 L841.4 315.6 L839.0 315.8 M834.2 197.6 L839.2 198.6 L844.3 201.0 L849.3 204.9 L854.0 210.1 L858.4 216.5 L862.3 223.9 L865.6 232.2 L868.3 241.1 L870.2 250.4 L871.4 259.8 L871.7 269.2 L871.2 278.2 L870.0 286.7 L867.9 294.3 L865.1 301.0 L861.7 306.5 L857.7 310.7 L853.3 313.6 L848.5 314.9 L846.0 315.0 M842.6 196.9 L847.7 197.9 L852.7 200.3 L857.6 204.3 L862.3 209.5 L866.6 216.0 L870.4 223.4 L873.7 231.7 L876.3 240.6 L878.1 249.9 L879.2 259.4 L879.4 268.8 L878.8 277.8 L877.5 286.2 L875.3 293.9 L872.5 300.5 L869.0 306.0 L865.0 310.2 L860.5 313.0 L855.7 314.3 L853.3 314.3 M852.7 196.1 L857.7 197.2 L862.7 199.9 L867.4 204.0 L871.9 209.4 L876.0 216.0 L879.5 223.6 L882.4 232.1 L884.7 241.1 L886.1 250.5 L886.8 260.0 L886.7 269.3 L885.8 278.3 L884.1 286.7 L881.7 294.3 L878.6 300.8 L874.9 306.2 L870.8 310.3 L866.2 312.9 L861.4 314.0 L858.9 314.0 M863.9 195.2 L868.8 196.7 L873.6 199.6 L878.2 204.0 L882.3 209.7 L886.0 216.5 L889.2 224.4 L891.6 233.0 L893.3 242.1 L894.3 251.6 L894.5 261.2 L893.8 270.5 L892.4 279.5 L890.3 287.8 L887.4 295.3 L884.0 301.7 L880.0 306.9 L875.6 310.7 L870.9 313.1 L866.0 313.9 L863.5 313.7 M858.9 195.6 L864.2 196.0 L869.6 197.9 L875.1 201.3 L880.5 206.0 L885.7 212.1 L890.5 219.2 L894.8 227.3 L898.5 236.1 L901.5 245.3 L903.8 254.9 L905.2 264.4 L905.7 273.7 L905.3 282.4 L904.1 290.5 L902.1 297.7 L899.2 303.7 L895.6 308.5 L891.4 311.9 L886.7 313.8 L884.2 314.2 M331.7 389.2 L343.4 394.4 L350.1 396.5 L356.8 398.6 L363.6 400.7 L370.5 402.8 L377.2 404.8 L384.2 406.8 L390.7 408.6 L397.0 410.2 L403.3 411.6 L408.4 412.3 L413.5 413.0 L418.5 413.4 L423.3 413.6 L426.7 413.1 L430.9 412.9 L434.1 412.1 L436.3 410.9 L439.9 410.0 L444.1 409.1 L447.2 407.9 L450.1 406.5 L454.1 405.1 L458.0 403.4 L461.4 401.6 L465.9 399.5 L469.8 397.3 L475.4 394.5 L480.4 391.7 L486.6 388.4 L493.2 384.8 L499.1 381.2 L505.1 377.4 L511.1 373.5 L516.2 369.9 L521.4 366.1 L526.1 362.6 L531.2 358.8 L536.0 355.2 L540.8 351.6 L546.8 347.4 L552.5 343.5 L558.1 339.4 L563.6 335.4 L568.8 331.3 L574.0 327.2 L578.5 323.4 L582.7 319.5 L587.9 315.1 L593.7 310.2 L599.6 305.2 L606.3 300.1 L612.9 295.1 L618.9 290.5 L625.4 285.6 L632.6 280.4 L639.7 275.4 L647.0 270.3 L654.4 265.3 L662.0 260.2 L669.4 255.2 L677.4 250.1 L685.6 245.1 L694.0 240.5 L703.0 236.1 L711.9 232.0 L720.5 228.4 L729.3 225.0 L738.2 221.9 L747.2 219.1 L756.4 216.6 L765.5 214.3 L774.6 212.3 L783.6 210.4 L792.4 208.7 L801.5 207.2 L810.7 205.8 L819.8 204.7 L828.6 203.7 L837.3 202.8 L845.9 202.1 L854.3 201.4 L864.2 201.0 L875.1 200.8 L871.3 198.8 M337.2 399.2 L348.2 404.7 L355.0 406.7 L361.7 408.7 L368.6 410.8 L375.4 412.9 L382.3 414.8 L389.2 416.8 L395.8 418.5 L402.2 420.0 L408.6 421.4 L414.1 421.9 L419.5 422.3 L424.7 422.5 L429.7 422.5 L433.6 421.6 L438.1 421.1 L441.7 419.8 L444.4 418.1 L448.2 416.7 L452.7 415.5 L456.1 413.8 L459.2 411.9 L463.3 410.0 L467.4 407.9 L470.9 405.6 L475.5 403.2 L479.4 400.6 L485.0 397.6 L490.0 394.5 L496.1 391.2 L502.7 387.5 L508.6 383.8 L514.6 380.0 L520.6 376.0 L525.7 372.2 L531.0 368.3 L535.6 364.5 L540.7 360.6 L545.5 356.7 L550.3 352.9 L556.2 348.7 L561.8 344.7 L567.3 340.5 L572.8 336.4 L577.9 332.2 L583.0 327.9 L587.4 323.9 L591.5 319.7 L596.6 315.2 L602.3 310.3 L608.1 305.3 L614.6 300.3 L621.0 295.4 L626.9 290.8 L633.3 286.0 L640.4 281.0 L647.4 276.0 L654.5 271.2 L661.8 266.2 L669.3 261.3 L676.6 256.4 L684.5 251.6 L692.7 246.8 L701.0 242.4 L709.9 238.2 L718.6 234.4 L727.1 231.0 L735.8 227.8 L744.5 224.8 L753.5 222.2 L762.5 219.8 L771.5 217.7 L780.4 215.8 L789.3 214.1 L798.0 212.5 L807.0 211.1 L816.0 209.9 L825.1 208.8 L833.7 207.9 L842.4 207.2 L850.9 206.5 L859.2 205.8 L868.9 205.6 L879.6 205.7 L876.9 202.7 M340.8 408.6 L351.1 414.2 L358.0 416.2 L364.7 418.2 L371.6 420.2 L378.6 422.2 L385.4 424.2 L392.4 426.1 L399.1 427.8 L405.6 429.2 L412.1 430.5 L417.8 430.9 L423.5 431.2 L428.9 431.2 L434.3 431.1 L438.5 429.9 L443.4 429.1 L447.4 427.6 L450.5 425.5 L454.7 423.7 L459.4 422.2 L463.1 420.0 L466.5 417.7 L470.7 415.5 L475.0 413.0 L478.7 410.3 L483.3 407.6 L487.4 404.7 L493.0 401.5 L498.0 398.2 L504.1 394.8 L510.6 391.1 L516.6 387.3 L522.6 383.5 L528.6 379.4 L533.8 375.5 L539.1 371.3 L543.8 367.4 L548.9 363.3 L553.7 359.3 L558.4 355.3 L564.3 351.0 L569.8 346.9 L575.3 342.6 L580.7 338.4 L585.7 334.1 L590.7 329.7 L595.2 325.4 L599.3 321.0 L604.2 316.5 L609.8 311.5 L615.5 306.5 L621.9 301.6 L628.2 296.7 L633.9 292.2 L640.2 287.4 L647.1 282.4 L654.0 277.5 L661.0 272.8 L668.2 268.0 L675.6 263.2 L682.8 258.4 L690.6 253.8 L698.7 249.2 L706.9 245.0 L715.6 241.0 L724.2 237.4 L732.6 234.1 L741.2 231.0 L749.8 228.2 L758.6 225.7 L767.4 223.5 L776.3 221.5 L785.1 219.7 L793.8 218.1 L802.5 216.6 L811.3 215.2 L820.2 214.1 L829.1 213.2 L837.7 212.4 L846.3 211.6 L854.7 211.0 L863.0 210.4 L872.5 210.3 L882.9 210.6 L881.3 206.9 M343.2 417.7 L353.0 423.4 L359.9 425.4 L366.7 427.4 L373.6 429.4 L380.6 431.4 L387.5 433.3 L394.5 435.2 L401.3 436.8 L407.9 438.2 L414.5 439.5 L420.5 439.7 L426.4 440.0 L432.1 439.9 L437.8 439.6 L442.4 438.2 L447.6 437.2 L452.0 435.4 L455.6 433.0 L460.2 430.9 L465.1 429.1 L469.1 426.6 L472.8 423.9 L477.3 421.4 L481.7 418.5 L485.6 415.5 L490.4 412.6 L494.5 409.3 L500.2 406.0 L505.2 402.5 L511.3 399.0 L517.8 395.2 L523.7 391.4 L529.8 387.5 L535.8 383.4 L541.1 379.3 L546.4 375.1 L551.2 370.9 L556.3 366.6 L561.2 362.5 L565.9 358.4 L571.7 354.0 L577.2 349.8 L582.6 345.4 L587.9 341.1 L592.9 336.6 L597.9 332.1 L602.4 327.7 L606.4 323.0 L611.3 318.4 L616.8 313.4 L622.4 308.4 L628.7 303.6 L634.8 298.7 L640.5 294.1 L646.6 289.3 L653.4 284.5 L660.1 279.7 L667.0 275.1 L674.1 270.4 L681.3 265.7 L688.5 261.0 L696.2 256.5 L704.1 252.1 L712.2 248.0 L720.8 244.2 L729.3 240.7 L737.5 237.7 L745.9 234.7 L754.4 232.0 L763.1 229.6 L771.8 227.5 L780.5 225.6 L789.1 223.9 L797.7 222.3 L806.3 220.9 L815.0 219.6 L823.8 218.6 L832.6 217.7 L841.1 217.0 L849.6 216.3 L857.9 215.7 L866.1 215.1 L875.5 215.2 L885.6 215.7 L885.1 211.3 M344.9 426.7 L354.1 432.5 L361.0 434.5 L367.9 436.4 L374.8 438.4 L381.8 440.4 L388.8 442.3 L395.8 444.2 L402.6 445.8 L409.4 447.1 L416.1 448.4 L422.4 448.5 L428.5 448.7 L434.5 448.5 L440.4 448.1 L445.5 446.6 L451.1 445.4 L455.9 443.4 L460.0 440.6 L464.9 438.3 L470.0 436.2 L474.4 433.5 L478.4 430.4 L483.1 427.6 L487.8 424.5 L491.9 421.1 L496.8 417.9 L501.1 414.4 L506.8 410.9 L511.9 407.2 L517.9 403.7 L524.5 399.8 L530.4 396.0 L536.5 392.0 L542.5 387.8 L547.8 383.6 L553.3 379.2 L558.1 375.0 L563.3 370.5 L568.2 366.2 L572.9 361.9 L578.7 357.5 L584.1 353.2 L589.5 348.7 L594.8 344.3 L599.8 339.7 L604.8 335.0 L609.2 330.4 L613.2 325.6 L618.1 320.8 L623.5 315.8 L629.0 310.8 L635.1 306.0 L641.1 301.1 L646.7 296.5 L652.6 291.7 L659.3 287.0 L665.9 282.2 L672.7 277.7 L679.6 273.1 L686.8 268.5 L693.9 263.9 L701.4 259.7 L709.2 255.4 L717.2 251.4 L725.6 247.8 L733.9 244.5 L742.0 241.5 L750.3 238.6 L758.6 236.0 L767.1 233.7 L775.7 231.7 L784.2 229.9 L792.7 228.3 L801.2 226.8 L809.6 225.4 L818.2 224.2 L826.9 223.2 L835.6 222.5 L843.9 221.7 L852.4 221.1 L860.6 220.5 L868.8 220.0 L878.0 220.2 L887.9 220.8 L888.4 215.9 M345.8 435.7 L354.5 441.5 L361.5 443.5 L368.4 445.4 L375.4 447.3 L382.4 449.3 L389.4 451.2 L396.5 453.1 L403.4 454.6 L410.2 456.0 L417.1 457.2 L423.7 457.3 L430.0 457.4 L436.3 457.1 L442.5 456.6 L448.0 455.0 L453.9 453.7 L459.1 451.5 L463.7 448.5 L469.0 445.9 L474.4 443.6 L479.1 440.6 L483.5 437.2 L488.4 434.2 L493.3 430.7 L497.7 427.1 L502.7 423.7 L507.2 419.8 L512.9 416.2 L518.1 412.4 L524.2 408.7 L530.7 404.9 L536.6 400.9 L542.7 397.0 L548.8 392.7 L554.2 388.4 L559.7 383.8 L564.7 379.4 L569.9 374.8 L574.8 370.4 L579.6 365.9 L585.3 361.4 L590.7 357.0 L596.0 352.4 L601.3 347.9 L606.3 343.2 L611.3 338.3 L615.7 333.6 L619.8 328.5 L624.6 323.7 L629.9 318.6 L635.3 313.6 L641.3 308.8 L647.2 304.0 L652.6 299.4 L658.5 294.6 L665.0 289.9 L671.5 285.2 L678.1 280.8 L684.9 276.2 L691.9 271.7 L698.9 267.2 L706.3 263.1 L714.0 258.9 L721.8 255.1 L730.1 251.7 L738.3 248.4 L746.2 245.6 L754.3 242.8 L762.5 240.3 L770.9 238.1 L779.2 236.1 L787.6 234.4 L796.0 232.9 L804.3 231.4 L812.6 230.1 L821.1 229.0 L829.6 228.1 L838.2 227.4 L846.5 226.7 L854.8 226.1 L863.0 225.5 L871.1 225.0 L880.1 225.3 L889.7 226.0 L891.4 220.8 M346.3 444.7 L354.3 450.4 L361.4 452.4 L368.3 454.3 L375.4 456.2 L382.4 458.2 L389.5 460.0 L396.6 461.9 L403.6 463.5 L410.5 464.8 L417.5 466.0 L424.4 466.1 L431.0 466.1 L437.5 465.8 L444.0 465.2 L449.9 463.5 L456.1 462.1 L461.8 459.7 L466.9 456.5 L472.6 453.7 L478.3 451.2 L483.3 447.9 L488.1 444.3 L493.3 441.0 L498.4 437.3 L503.1 433.3 L508.2 429.7 L512.9 425.6 L518.7 421.8 L524.0 417.8 L530.0 414.1 L536.5 410.2 L542.5 406.2 L548.6 402.2 L554.8 397.9 L560.2 393.5 L565.8 388.8 L570.9 384.2 L576.2 379.5 L581.1 374.9 L585.9 370.3 L591.6 365.7 L597.0 361.2 L602.3 356.5 L607.5 352.0 L612.5 347.1 L617.5 342.1 L622.0 337.2 L626.1 331.9 L630.8 327.0 L636.1 321.8 L641.4 316.7 L647.3 312.1 L653.0 307.2 L658.4 302.5 L664.1 297.7 L670.5 293.1 L676.8 288.4 L683.3 284.1 L690.0 279.6 L696.8 275.2 L703.7 270.8 L711.0 266.8 L718.5 262.8 L726.2 259.1 L734.3 255.8 L742.3 252.7 L750.1 249.9 L758.1 247.3 L766.1 244.8 L774.3 242.7 L782.5 240.8 L790.7 239.1 L799.0 237.6 L807.2 236.2 L815.4 234.9 L823.7 233.9 L832.1 233.0 L840.5 232.4 L848.7 231.7 L856.9 231.2 L865.1 230.6 L873.1 230.2 L881.9 230.5 L891.2 231.3 L894.0 225.8 M346.1 453.6 L353.7 459.3 L360.7 461.2 L367.8 463.1 L374.9 465.0 L381.9 467.0 L389.0 468.8 L396.1 470.7 L403.2 472.2 L410.3 473.5 L417.4 474.7 L424.5 474.8 L431.4 474.8 L438.2 474.5 L445.0 473.8 L451.4 472.0 L457.9 470.5 L464.0 468.1 L469.6 464.6 L475.7 461.6 L481.7 459.0 L487.1 455.5 L492.3 451.6 L497.7 448.1 L503.1 444.1 L508.0 439.9 L513.4 436.0 L518.3 431.7 L524.1 427.7 L529.5 423.6 L535.5 419.8 L542.0 415.9 L548.1 411.8 L554.2 407.8 L560.4 403.4 L566.0 398.9 L571.6 394.1 L576.8 389.4 L582.2 384.5 L587.2 379.8 L592.0 375.0 L597.7 370.3 L603.0 365.8 L608.3 361.0 L613.5 356.3 L618.6 351.3 L623.5 346.2 L628.0 341.1 L632.2 335.6 L636.9 330.6 L642.1 325.4 L647.3 320.2 L653.0 315.6 L658.7 310.7 L663.9 306.0 L669.5 301.2 L675.7 296.6 L681.9 292.0 L688.3 287.7 L694.8 283.3 L701.6 279.0 L708.3 274.6 L715.5 270.8 L722.8 266.9 L730.4 263.3 L738.3 260.1 L746.1 257.1 L753.7 254.5 L761.6 251.9 L769.5 249.5 L777.5 247.5 L785.5 245.7 L793.6 244.0 L801.6 242.6 L809.7 241.2 L817.8 240.0 L826.0 239.0 L834.2 238.2 L842.5 237.6 L850.6 236.9 L858.8 236.4 L866.8 235.9 L874.9 235.4 L883.4 235.8 L892.4 236.7 L896.4 230.9 M345.6 462.4 L352.5 468.0 L359.6 470.0 L366.7 471.8 L373.9 473.8 L381.0 475.7 L388.1 477.5 L395.3 479.4 L402.4 480.9 L409.6 482.2 L416.8 483.4 L424.2 483.5 L431.4 483.5 L438.4 483.1 L445.5 482.5 L452.3 480.6 L459.2 479.0 L465.7 476.5 L471.9 472.9 L478.3 469.7 L484.6 466.9 L490.5 463.2 L496.0 459.1 L501.7 455.3 L507.5 451.1 L512.6 446.7 L518.1 442.6 L523.2 438.1 L529.2 433.9 L534.7 429.6 L540.7 425.8 L547.2 421.8 L553.3 417.7 L559.4 413.6 L565.7 409.2 L571.3 404.6 L577.1 399.7 L582.4 394.9 L587.8 389.8 L592.9 385.0 L597.8 380.0 L603.5 375.3 L608.8 370.7 L614.1 365.7 L619.3 361.0 L624.3 355.8 L629.3 350.6 L633.8 345.4 L638.0 339.6 L642.7 334.5 L647.9 329.3 L653.0 324.1 L658.6 319.4 L664.1 314.6 L669.2 309.8 L674.7 305.0 L680.8 300.4 L686.9 295.8 L693.0 291.6 L699.5 287.3 L706.1 283.0 L712.7 278.7 L719.7 275.0 L726.9 271.2 L734.3 267.7 L742.0 264.7 L749.7 261.8 L757.1 259.3 L764.8 256.7 L772.5 254.4 L780.4 252.4 L788.3 250.6 L796.2 249.1 L804.1 247.6 L812.0 246.3 L819.9 245.1 L828.0 244.1 L836.1 243.4 L844.3 242.8 L852.3 242.2 L860.3 241.7 L868.3 241.2 L876.3 240.7 L884.7 241.2 L893.4 242.2 L898.5 236.2 M344.5 471.1 L350.9 476.7 L358.1 478.6 L365.2 480.4 L372.4 482.4 L379.6 484.3 L386.7 486.1 L393.9 488.0 L401.2 489.5 L408.4 490.8 L415.7 492.0 L423.5 492.1 L430.8 492.1 L438.2 491.8 L445.5 491.1 L452.8 489.2 L460.0 487.6 L467.0 484.9 L473.7 481.2 L480.6 477.8 L487.2 474.9 L493.4 471.0 L499.3 466.7 L505.4 462.8 L511.4 458.3 L516.9 453.6 L522.6 449.4 L527.9 444.6 L533.9 440.3 L539.5 435.9 L545.6 432.0 L552.0 428.0 L558.1 423.8 L564.3 419.7 L570.7 415.2 L576.4 410.5 L582.3 405.6 L587.7 400.6 L593.2 395.4 L598.4 390.4 L603.3 385.3 L609.0 380.5 L614.2 375.8 L619.6 370.8 L624.7 365.9 L629.8 360.6 L634.9 355.2 L639.4 349.9 L643.7 343.9 L648.4 338.7 L653.4 333.4 L658.5 328.1 L663.9 323.6 L669.3 318.7 L674.3 313.9 L679.7 309.0 L685.7 304.5 L691.6 299.9 L697.6 295.8 L703.9 291.4 L710.4 287.2 L716.9 283.0 L723.7 279.4 L730.8 275.7 L738.0 272.3 L745.5 269.4 L753.0 266.6 L760.3 264.2 L767.8 261.7 L775.4 259.5 L783.0 257.5 L790.7 255.8 L798.5 254.2 L806.2 252.8 L814.0 251.5 L821.8 250.3 L829.8 249.4 L837.7 248.7 L845.7 248.1 L853.7 247.5 L861.6 247.1 L869.5 246.6 L877.4 246.1 L885.6 246.6 L894.0 247.7 L900.4 241.5 M343.0 479.7 L348.9 485.1 L356.1 487.1 L363.3 488.9 L370.5 490.8 L377.7 492.8 L384.9 494.6 L392.1 496.4 L399.5 498.0 L406.9 499.3 L414.3 500.5 L422.3 500.7 L429.9 500.7 L437.5 500.3 L445.1 499.6 L452.8 497.7 L460.4 496.1 L467.9 493.3 L475.1 489.5 L482.4 486.1 L489.3 483.0 L495.9 479.0 L502.3 474.4 L508.6 470.3 L514.9 465.7 L520.7 460.8 L526.6 456.4 L532.1 451.4 L538.3 447.0 L544.0 442.4 L550.1 438.4 L556.5 434.4 L562.7 430.2 L568.9 426.0 L575.3 421.5 L581.2 416.7 L587.2 411.6 L592.6 406.5 L598.3 401.3 L603.5 396.1 L608.6 390.9 L614.2 386.0 L619.4 381.2 L624.8 376.1 L629.9 371.1 L635.1 365.7 L640.1 360.2 L644.7 354.6 L649.1 348.5 L653.7 343.2 L658.7 337.8 L663.7 332.5 L669.0 327.9 L674.3 323.0 L679.2 318.2 L684.5 313.2 L690.3 308.7 L696.1 304.2 L701.9 300.1 L708.1 295.8 L714.4 291.6 L720.9 287.5 L727.5 284.0 L734.4 280.4 L741.5 277.1 L748.8 274.3 L756.1 271.6 L763.1 269.2 L770.5 266.8 L777.9 264.6 L785.4 262.7 L793.0 261.0 L800.5 259.5 L808.1 258.1 L815.8 256.8 L823.5 255.6 L831.3 254.7 L839.1 254.0 L847.0 253.5 L854.8 252.9 L862.6 252.5 L870.5 252.0 L878.3 251.6 L886.3 252.1 L894.4 253.3 L902.0 247.0 M341.0 488.2 L346.4 493.4 L353.7 495.3 L361.0 497.2 L368.2 499.1 L375.4 501.0 L382.7 502.9 L389.9 504.7 L397.3 506.3 L404.9 507.6 L412.4 508.9 L420.7 509.0 L428.5 509.1 L436.4 508.7 L444.3 508.1 L452.5 506.1 L460.3 504.5 L468.3 501.8 L476.0 497.9 L483.7 494.3 L490.9 491.2 L498.0 486.9 L504.8 482.2 L511.4 478.0 L518.0 473.2 L524.1 468.1 L530.2 463.5 L536.0 458.3 L542.3 453.8 L548.1 449.0 L554.2 445.0 L560.7 440.9 L566.9 436.7 L573.1 432.5 L579.6 427.9 L585.6 423.0 L591.7 417.9 L597.3 412.7 L603.0 407.3 L608.3 402.0 L613.5 396.7 L619.1 391.7 L624.3 386.8 L629.7 381.6 L634.8 376.6 L640.0 371.0 L645.1 365.3 L649.8 359.6 L654.2 353.3 L658.9 347.9 L663.8 342.4 L668.7 337.1 L673.9 332.5 L679.1 327.6 L683.9 322.6 L689.1 317.7 L694.7 313.2 L700.3 308.6 L706.0 304.6 L712.0 300.3 L718.2 296.2 L724.6 292.1 L731.0 288.7 L737.8 285.2 L744.7 282.0 L751.8 279.3 L758.9 276.7 L765.8 274.3 L773.0 272.0 L780.2 269.8 L787.6 268.0 L794.9 266.3 L802.3 264.8 L809.8 263.4 L817.3 262.2 L824.8 261.0 L832.5 260.1 L840.2 259.4 L847.9 259.0 L855.6 258.4 L863.4 257.9 L871.2 257.5 L879.0 257.0 L886.7 257.6 L894.5 258.8 L903.3 252.5 M338.7 496.4 L343.6 501.5 L350.9 503.4 L358.2 505.3 L365.5 507.2 L372.8 509.1 L380.1 510.9 L387.4 512.8 L394.8 514.4 L402.4 515.7 L410.1 517.0 L418.6 517.2 L426.7 517.3 L434.9 517.0 L443.0 516.3 L451.6 514.5 L459.9 512.9 L468.2 510.1 L476.5 506.2 L484.7 502.5 L492.2 499.3 L499.6 495.0 L506.8 490.1 L513.8 485.7 L520.7 480.7 L527.2 475.4 L533.5 470.7 L539.5 465.3 L545.9 460.7 L551.8 455.8 L558.0 451.7 L564.4 447.6 L570.7 443.3 L577.0 439.1 L583.5 434.5 L589.6 429.6 L595.8 424.3 L601.5 419.0 L607.4 413.5 L612.8 408.1 L618.0 402.6 L623.6 397.6 L628.9 392.6 L634.3 387.3 L639.4 382.2 L644.6 376.4 L649.8 370.7 L654.5 364.8 L659.1 358.3 L663.7 352.8 L668.6 347.3 L673.4 341.8 L678.5 337.3 L683.5 332.3 L688.3 327.3 L693.3 322.3 L698.8 317.8 L704.3 313.3 L709.8 309.3 L715.7 305.0 L721.8 301.0 L728.0 296.9 L734.3 293.6 L740.9 290.2 L747.6 287.1 L754.5 284.4 L761.4 281.9 L768.1 279.6 L775.2 277.3 L782.3 275.1 L789.4 273.3 L796.6 271.6 L803.8 270.2 L811.1 268.8 L818.5 267.5 L825.9 266.4 L833.5 265.5 L841.0 264.9 L848.6 264.4 L856.2 263.8 L863.9 263.4 L871.6 262.9 L879.3 262.5 L886.9 263.0 L894.4 264.3 L904.3 258.0 M335.9 504.4 L340.3 509.2 L347.7 511.2 L355.1 513.0 L362.4 515.0 L369.7 516.9 L377.0 518.7 L384.4 520.6 L391.9 522.2 L399.6 523.6 L407.4 524.9 L416.2 525.2 L424.5 525.3 L432.9 525.1 L441.4 524.5 L450.4 522.6 L458.9 521.1 L467.7 518.3 L476.6 514.4 L485.1 510.7 L493.0 507.4 L500.8 502.9 L508.5 498.0 L515.7 493.5 L523.0 488.3 L529.8 482.9 L536.3 478.0 L542.6 472.5 L549.1 467.7 L555.1 462.7 L561.3 458.6 L567.8 454.4 L574.1 450.1 L580.4 445.9 L587.0 441.2 L593.2 436.2 L599.6 430.9 L605.4 425.5 L611.4 419.9 L616.9 414.4 L622.2 408.8 L627.8 403.6 L633.1 398.6 L638.5 393.1 L643.7 387.9 L648.9 382.1 L654.1 376.2 L658.9 370.2 L663.6 363.5 L668.2 357.9 L673.1 352.3 L677.9 346.8 L682.7 342.2 L687.7 337.2 L692.4 332.2 L697.3 327.1 L702.6 322.6 L708.0 318.1 L713.4 314.1 L719.1 309.9 L725.1 305.8 L731.1 301.8 L737.2 298.6 L743.7 295.2 L750.2 292.2 L756.9 289.6 L763.7 287.1 L770.2 284.9 L777.1 282.6 L784.0 280.5 L791.0 278.6 L798.0 277.0 L805.1 275.5 L812.2 274.2 L819.4 272.9 L826.8 271.8 L834.1 270.9 L841.6 270.2 L849.0 269.8 L856.5 269.2 L864.1 268.8 L871.7 268.3 L879.4 267.9 L886.8 268.5 L893.9 269.7 L905.1 263.5 M332.8 512.1 L336.7 516.7 L344.1 518.6 L351.5 520.5 L358.9 522.5 L366.2 524.4 L373.6 526.2 L381.0 528.1 L388.6 529.8 L396.4 531.2 L404.3 532.5 L413.3 532.9 L421.9 533.1 L430.6 532.9 L439.3 532.3 L448.7 530.6 L457.6 529.1 L466.8 526.4 L476.2 522.4 L485.2 518.7 L493.3 515.4 L501.6 510.9 L509.7 505.8 L517.2 501.2 L524.8 495.9 L531.9 490.3 L538.7 485.3 L545.2 479.7 L551.8 474.8 L558.0 469.7 L564.2 465.5 L570.8 461.3 L577.1 456.9 L583.5 452.7 L590.1 448.0 L596.4 442.9 L602.9 437.6 L608.9 432.0 L615.0 426.4 L620.6 420.8 L626.0 415.0 L631.6 409.8 L636.9 404.7 L642.3 399.1 L647.5 393.8 L652.8 387.9 L658.1 381.9 L663.0 375.8 L667.8 368.9 L672.4 363.2 L677.2 357.5 L682.0 351.9 L686.7 347.4 L691.5 342.3 L696.1 337.2 L701.0 332.0 L706.2 327.5 L711.4 323.0 L716.6 319.0 L722.2 314.8 L728.0 310.8 L734.0 306.8 L739.9 303.7 L746.2 300.4 L752.6 297.4 L759.1 294.9 L765.6 292.4 L772.0 290.2 L778.7 287.9 L785.5 285.8 L792.3 284.0 L799.1 282.4 L806.0 280.9 L813.0 279.5 L820.1 278.3 L827.3 277.1 L834.5 276.3 L841.8 275.6 L849.1 275.1 L856.6 274.5 L864.0 274.1 L871.6 273.7 L879.2 273.2 L886.4 273.8 L893.3 275.0 L905.5 269.0 M329.2 519.5 L332.7 523.8 L340.1 525.8 L347.6 527.7 L355.0 529.6 L362.4 531.6 L369.8 533.4 L377.2 535.3 L384.9 537.0 L392.8 538.4 L400.8 539.8 L410.1 540.3 L418.9 540.6 L427.8 540.5 L436.7 540.0 L446.6 538.4 L455.8 536.9 L465.4 534.2 L475.3 530.3 L484.7 526.6 L493.2 523.2 L501.9 518.7 L510.4 513.6 L518.2 508.9 L526.2 503.5 L533.6 497.8 L540.6 492.7 L547.4 486.9 L554.1 481.9 L560.5 476.7 L566.7 472.4 L573.3 468.2 L579.6 463.8 L586.0 459.6 L592.8 454.8 L599.2 449.7 L605.8 444.3 L612.0 438.7 L618.2 432.9 L623.9 427.2 L629.4 421.4 L635.0 416.1 L640.3 410.9 L645.8 405.2 L651.0 399.9 L656.4 393.8 L661.7 387.7 L666.7 381.4 L671.6 374.4 L676.2 368.6 L681.0 362.8 L685.7 357.2 L690.3 352.6 L695.1 347.5 L699.6 342.3 L704.4 337.1 L709.4 332.6 L714.5 328.0 L719.6 324.0 L725.0 319.9 L730.7 315.9 L736.5 311.9 L742.3 308.8 L748.4 305.6 L754.6 302.6 L760.9 300.1 L767.2 297.7 L773.4 295.5 L780.0 293.3 L786.6 291.2 L793.2 289.4 L799.9 287.7 L806.6 286.2 L813.5 284.9 L820.4 283.6 L827.5 282.4 L834.6 281.5 L841.8 280.9 L848.9 280.4 L856.3 279.8 L863.7 279.4 L871.2 278.9 L878.8 278.5 L885.7 279.0 L892.3 280.2 L905.7 274.4 M325.2 526.5 L328.3 530.5 L335.8 532.5 L343.3 534.4 L350.7 536.4 L358.2 538.3 L365.7 540.2 L373.1 542.1 L380.8 543.8 L388.8 545.3 L396.9 546.7 L406.4 547.3 L415.4 547.7 L424.6 547.7 L433.8 547.3 L444.0 545.8 L453.5 544.4 L463.6 541.9 L474.0 538.1 L483.8 534.3 L492.5 531.0 L501.6 526.4 L510.6 521.2 L518.7 516.5 L527.0 511.0 L534.8 505.2 L542.0 500.0 L549.1 494.1 L555.9 489.0 L562.5 483.8 L568.7 479.4 L575.3 475.2 L581.7 470.7 L588.2 466.5 L595.0 461.7 L601.5 456.6 L608.2 451.1 L614.6 445.4 L620.9 439.6 L626.7 433.8 L632.4 427.9 L638.0 422.5 L643.3 417.2 L648.8 411.4 L654.0 406.0 L659.5 399.8 L664.9 393.6 L670.0 387.2 L675.0 380.0 L679.7 374.1 L684.4 368.3 L689.1 362.6 L693.5 358.0 L698.2 352.8 L702.6 347.5 L707.4 342.3 L712.2 337.7 L717.2 333.1 L722.1 329.2 L727.5 325.0 L733.0 321.0 L738.7 317.0 L744.3 314.0 L750.2 310.8 L756.3 307.9 L762.3 305.4 L768.5 303.0 L774.5 300.9 L780.9 298.6 L787.4 296.5 L793.8 294.7 L800.4 293.0 L806.9 291.5 L813.6 290.1 L820.5 288.8 L827.4 287.6 L834.4 286.7 L841.4 286.1 L848.5 285.6 L855.7 285.0 L863.0 284.5 L870.4 284.0 L878.0 283.6 L884.8 284.1 L891.0 285.3 L905.6 279.7 M320.8 533.0 L323.5 536.8 L331.0 538.8 L338.6 540.7 L346.1 542.7 L353.5 544.7 L361.1 546.6 L368.5 548.5 L376.3 550.2 L384.4 551.8 L392.6 553.2 L402.3 554.0 L411.5 554.5 L420.9 554.5 L430.4 554.3 L441.0 552.9 L450.8 551.6 L461.2 549.2 L472.1 545.5 L482.3 541.8 L491.4 538.5 L500.9 533.9 L510.2 528.8 L518.7 524.0 L527.3 518.5 L535.5 512.6 L542.9 507.3 L550.3 501.3 L557.2 496.1 L563.9 490.8 L570.2 486.4 L576.8 482.1 L583.3 477.7 L589.8 473.4 L596.6 468.6 L603.3 463.5 L610.2 458.0 L616.6 452.2 L623.1 446.3 L629.1 440.4 L634.8 434.4 L640.4 429.0 L645.8 423.6 L651.3 417.8 L656.6 412.2 L662.1 405.9 L667.6 399.6 L672.8 393.2 L678.0 385.8 L682.7 379.8 L687.4 373.9 L692.0 368.1 L696.4 363.5 L700.9 358.2 L705.3 352.9 L710.0 347.5 L714.7 343.0 L719.5 338.3 L724.3 334.4 L729.5 330.2 L734.9 326.2 L740.5 322.2 L745.9 319.2 L751.7 316.0 L757.6 313.1 L763.4 310.7 L769.4 308.4 L775.2 306.2 L781.5 304.0 L787.8 301.8 L794.1 300.0 L800.5 298.3 L806.9 296.7 L813.5 295.3 L820.2 294.0 L827.0 292.7 L833.9 291.9 L840.8 291.2 L847.7 290.6 L854.9 290.0 L862.1 289.5 L869.4 289.1 L876.9 288.6 L883.5 289.1 L889.5 290.2 L905.1 285.0 M316.0 539.1 L318.3 542.5 L325.8 544.6 L333.5 546.5 L341.0 548.6 L348.5 550.5 L356.0 552.4 L363.5 554.4 L371.4 556.2 L379.6 557.8 L387.8 559.3 L397.8 560.2 L407.2 560.8 L416.8 561.0 L426.4 560.8 L437.4 559.7 L447.5 558.5 L458.3 556.2 L469.7 552.7 L480.3 549.1 L489.6 545.8 L499.5 541.3 L509.3 536.1 L518.1 531.3 L527.1 525.8 L535.5 519.8 L543.2 514.5 L550.8 508.5 L557.9 503.2 L564.8 497.8 L571.1 493.4 L577.7 489.1 L584.3 484.6 L590.8 480.3 L597.7 475.5 L604.6 470.4 L611.5 464.8 L618.2 459.0 L624.8 453.1 L630.8 447.2 L636.7 441.0 L642.3 435.5 L647.7 430.1 L653.3 424.1 L658.6 418.6 L664.3 412.2 L669.8 405.8 L675.1 399.2 L680.5 391.7 L685.2 385.6 L689.9 379.7 L694.5 373.8 L698.7 369.1 L703.2 363.8 L707.5 358.4 L712.1 352.9 L716.7 348.3 L721.4 343.6 L726.1 339.6 L731.2 335.4 L736.4 331.4 L741.9 327.4 L747.1 324.5 L752.7 321.3 L758.4 318.4 L764.1 316.0 L769.9 313.6 L775.6 311.5 L781.7 309.2 L787.8 307.1 L794.0 305.2 L800.2 303.5 L806.5 301.9 L812.9 300.4 L819.5 299.0 L826.2 297.8 L833.0 296.8 L839.7 296.1 L846.5 295.6 L853.6 294.9 L860.7 294.4 L868.0 293.9 L875.5 293.5 L881.9 293.9 L887.6 294.9 L904.2 290.1 M310.6 544.7 L312.6 547.7 L320.2 549.8 L327.9 551.8 L335.4 553.8 L342.9 555.8 L350.5 557.8 L358.0 559.7 L366.0 561.6 L374.2 563.3 L382.5 564.8 L392.7 565.9 L402.2 566.6 L412.0 567.0 L421.9 567.0 L433.2 566.0 L443.6 565.0 L454.8 562.9 L466.6 559.6 L477.6 556.1 L487.2 552.8 L497.5 548.4 L507.7 543.4 L516.8 538.6 L526.1 533.0 L534.9 527.1 L542.8 521.7 L550.7 515.6 L558.0 510.3 L565.0 504.9 L571.4 500.4 L578.0 496.1 L584.6 491.6 L591.2 487.3 L598.2 482.5 L605.1 477.3 L612.2 471.8 L619.0 465.9 L625.8 459.9 L632.0 453.9 L638.0 447.7 L643.7 442.2 L649.0 436.7 L654.7 430.7 L660.1 425.0 L665.8 418.5 L671.5 412.0 L676.9 405.4 L682.4 397.8 L687.2 391.6 L691.8 385.6 L696.4 379.6 L700.5 374.9 L704.9 369.5 L709.2 364.0 L713.8 358.4 L718.2 353.8 L722.9 349.0 L727.4 345.0 L732.3 340.8 L737.5 336.7 L742.8 332.7 L747.8 329.8 L753.3 326.6 L758.9 323.7 L764.3 321.3 L769.9 318.9 L775.4 316.7 L781.4 314.4 L787.4 312.3 L793.4 310.3 L799.5 308.5 L805.6 306.9 L811.9 305.4 L818.4 303.9 L825.0 302.7 L831.6 301.7 L838.3 300.9 L845.0 300.3 L852.0 299.6 L859.0 299.1 L866.3 298.6 L873.7 298.1 L879.9 298.5 L885.4 299.4 L902.9 295.1 M304.5 549.6 L306.2 552.3 L313.9 554.3 L321.6 556.4 L329.2 558.5 L336.7 560.5 L344.3 562.5 L351.9 564.4 L359.9 566.3 L368.2 568.1 L376.6 569.8 L386.9 571.0 L396.6 571.9 L406.6 572.4 L416.7 572.6 L428.3 571.9 L438.9 571.1 L450.5 569.2 L462.7 566.1 L474.1 562.8 L484.0 559.6 L494.7 555.3 L505.2 550.4 L514.7 545.6 L524.3 540.1 L533.5 534.2 L541.6 528.8 L549.8 522.7 L557.2 517.4 L564.4 512.0 L570.8 507.5 L577.5 503.1 L584.2 498.6 L590.8 494.3 L597.9 489.5 L604.9 484.3 L612.2 478.8 L619.1 472.9 L626.0 466.9 L632.4 460.9 L638.5 454.6 L644.2 449.0 L649.7 443.4 L655.4 437.3 L660.8 431.6 L666.7 425.1 L672.4 418.5 L677.9 411.7 L683.7 404.1 L688.5 397.8 L693.1 391.7 L697.7 385.6 L701.7 380.8 L706.0 375.3 L710.3 369.7 L714.8 364.1 L719.1 359.4 L723.7 354.6 L728.0 350.5 L732.9 346.2 L737.9 342.2 L743.2 338.1 L748.0 335.2 L753.3 332.0 L758.7 329.1 L763.9 326.7 L769.4 324.2 L774.7 322.0 L780.5 319.6 L786.4 317.4 L792.3 315.4 L798.2 313.6 L804.2 311.8 L810.4 310.2 L816.8 308.7 L823.3 307.4 L829.8 306.4 L836.3 305.6 L842.9 304.9 L849.8 304.2 L856.8 303.6 L864.0 303.1 L871.3 302.6 L877.4 302.9 L882.6 303.6 L901.1 299.9 M297.5 553.7 L299.0 555.9 L306.6 558.1 L314.4 560.2 L322.0 562.3 L329.6 564.3 L337.3 566.3 L344.8 568.3 L352.9 570.3 L361.3 572.2 L369.7 573.9 L380.2 575.4 L390.0 576.5 L400.2 577.2 L410.5 577.6 L422.4 577.2 L433.2 576.6 L445.1 575.0 L457.8 572.3 L469.4 569.2 L479.6 566.1 L490.7 562.0 L501.7 557.2 L511.4 552.6 L521.4 547.2 L530.9 541.3 L539.3 536.0 L547.8 529.9 L555.3 524.6 L562.7 519.1 L569.2 514.6 L575.9 510.2 L582.7 505.7 L589.3 501.4 L596.5 496.7 L603.7 491.5 L611.1 486.0 L618.2 480.1 L625.2 474.1 L631.7 468.0 L638.0 461.7 L643.8 456.1 L649.3 450.4 L655.1 444.3 L660.6 438.5 L666.6 431.9 L672.4 425.2 L678.1 418.4 L684.0 410.7 L688.9 404.3 L693.6 398.1 L698.1 392.0 L702.1 387.1 L706.3 381.5 L710.6 375.8 L715.0 370.1 L719.3 365.3 L723.7 360.4 L728.0 356.3 L732.7 351.9 L737.6 347.8 L742.8 343.7 L747.4 340.7 L752.5 337.5 L757.8 334.6 L762.8 332.1 L768.1 329.5 L773.3 327.2 L778.9 324.8 L784.7 322.5 L790.4 320.4 L796.2 318.5 L802.1 316.7 L808.2 315.0 L814.4 313.4 L820.9 312.0 L827.3 310.9 L833.7 310.1 L840.1 309.3 L847.0 308.6 L853.9 307.9 L861.0 307.4 L868.4 306.8 L874.3 307.0 L879.2 307.6 L898.6 304.7 M288.7 556.6 L290.1 558.3 L297.8 560.5 L305.6 562.7 L313.2 564.8 L320.8 566.9 L328.5 569.0 L336.1 571.0 L344.1 573.1 L352.6 575.0 L361.1 576.9 L371.7 578.7 L381.7 580.0 L392.0 581.0 L402.4 581.6 L414.5 581.7 L425.6 581.4 L437.8 580.2 L450.8 577.9 L462.8 575.1 L473.3 572.3 L484.7 568.5 L496.1 564.0 L506.2 559.5 L516.5 554.3 L526.4 548.6 L535.1 543.4 L543.9 537.4 L551.6 532.1 L559.2 526.7 L565.8 522.2 L572.5 517.7 L579.4 513.2 L586.1 509.0 L593.3 504.2 L600.7 499.1 L608.2 493.6 L615.5 487.9 L622.7 481.8 L629.4 475.8 L635.9 469.5 L641.7 463.7 L647.3 458.1 L653.2 451.8 L658.8 446.0 L664.9 439.4 L670.9 432.7 L676.8 425.9 L682.9 418.1 L687.9 411.6 L692.6 405.3 L697.2 399.1 L701.0 394.1 L705.3 388.4 L709.5 382.6 L714.0 376.8 L718.1 371.8 L722.5 366.8 L726.6 362.6 L731.2 358.1 L736.0 353.9 L741.0 349.8 L745.5 346.7 L750.5 343.4 L755.5 340.3 L760.4 337.7 L765.5 335.1 L770.5 332.7 L776.0 330.2 L781.7 327.7 L787.3 325.5 L792.9 323.5 L798.7 321.5 L804.7 319.7 L810.8 318.1 L817.2 316.6 L823.5 315.4 L829.8 314.4 L836.2 313.6 L843.0 312.7 L849.8 312.0 L856.9 311.4 L864.2 310.8 L869.9 310.9 L874.7 311.3 L894.9 309.3" fill="none" stroke="#46e6e6" stroke-width="0.95"/></g>
<path d="M315.7 374.4 L317.6 375.0 L319.5 375.7 L321.5 376.3 L323.4 377.0 L325.3 377.6 L327.2 378.3 L329.1 378.9 L331.0 379.5 L333.0 380.2 L334.9 380.8 L336.8 381.5 L338.7 382.1 L340.6 382.7 L342.5 383.4 L344.5 384.0 L346.4 384.6 L348.3 385.3 L350.2 385.9 L352.2 386.5 L354.1 387.1 L356.0 387.8 L357.9 388.4 L359.9 389.0 L361.8 389.6 L363.7 390.2 L365.6 390.8 L367.6 391.4 L369.5 392.0 L371.4 392.6 L373.4 393.2 L375.3 393.7 L377.3 394.3 L379.2 394.9 L381.1 395.4 L383.1 396.0 L385.0 396.5 L387.0 397.1 L388.9 397.6 L390.9 398.1 L392.8 398.6 L394.8 399.1 L396.8 399.6 L398.7 400.0 L400.7 400.5 L402.7 400.9 L404.6 401.3 L406.6 401.6 L408.6 401.9 L410.6 402.2 L412.6 402.4 L414.6 402.6 L416.6 402.8 L418.6 402.9 L420.6 402.9 L422.6 402.9 L424.6 402.9 L426.6 402.8 L428.6 402.6 L430.5 402.4 L432.5 402.1 L434.5 401.8 L436.5 401.4 L438.4 401.0 L440.4 400.6 L442.3 400.0 L444.2 399.5 L446.1 398.9 L448.0 398.2 L449.9 397.5 L451.8 396.8 L453.6 396.0 L455.5 395.2 L457.3 394.4 L459.1 393.6 L461.0 392.7 L462.8 391.8 L464.6 390.9 L466.4 390.0 L468.2 389.1 L470.0 388.2 L471.8 387.2 L473.5 386.2 L475.3 385.3 L477.1 384.3 L478.8 383.3 L480.6 382.3 L482.3 381.2 L484.0 380.2 L485.8 379.1 L487.5 378.1 L489.2 377.0 L490.9 376.0 L492.6 374.9 L494.3 373.8 L496.0 372.7 L497.7 371.6 L499.4 370.5 L501.1 369.4 L502.8 368.3 L504.5 367.2 L506.2 366.1 L507.9 365.0 L509.6 363.9 L511.3 362.8 L513.0 361.7 L514.7 360.6 L516.4 359.5 L518.1 358.4 L519.8 357.3 L521.5 356.2 L523.2 355.1 L524.9 354.0 L526.5 352.8 L528.2 351.7 L529.9 350.6 L531.6 349.5 L533.3 348.4 L535.0 347.3 L536.7 346.2 L538.3 345.0 L540.0 343.9 L541.7 342.8 L543.4 341.6 L545.0 340.5 L546.7 339.3 L548.4 338.2 L550.0 337.0 L551.7 335.9 L553.3 334.7 L555.0 333.5 L556.6 332.4 L558.3 331.2 L559.9 330.0 L561.5 328.8 L563.1 327.6 L564.7 326.3 L566.3 325.1 L567.9 323.9 L569.5 322.6 L571.1 321.3 L572.7 320.1 L574.2 318.8 L575.8 317.5 L577.3 316.2 L578.9 315.0 L580.5 313.7 L582.0 312.4 L583.6 311.1 L585.1 309.8 L586.7 308.6 L588.3 307.3 L589.9 306.0 L591.5 304.8 L593.1 303.6 L594.7 302.3 L596.3 301.1 L597.9 299.9 L599.5 298.7 L601.1 297.4 L602.7 296.2 L604.4 295.0 L606.0 293.8 L607.6 292.6 L609.2 291.4 L610.8 290.2 L612.5 289.0 L614.1 287.8 L615.7 286.6 L617.3 285.3 L618.9 284.1 L620.6 282.9 L622.2 281.7 L623.8 280.5 L625.4 279.3 L627.1 278.1 L628.7 276.9 L630.3 275.7 L632.0 274.6 L633.6 273.4 L635.3 272.2 L636.9 271.0 L638.5 269.8 L640.2 268.7 L641.8 267.5 L643.5 266.3 L645.1 265.1 L646.8 264.0 L648.4 262.8 L650.1 261.6 L651.7 260.5 L653.4 259.3 L655.0 258.1 L656.7 257.0 L658.3 255.8 L660.0 254.6 L661.7 253.5 L663.3 252.4 L665.0 251.2 L666.7 250.1 L668.4 249.0 L670.1 247.9 L671.8 246.8 L673.5 245.7 L675.2 244.7 L676.9 243.6 L678.7 242.6 L680.4 241.6 L682.2 240.6 L683.9 239.6 L685.7 238.6 L687.5 237.7 L689.3 236.7 L691.1 235.8 L692.9 234.9 L694.7 234.0 L696.5 233.1 L698.3 232.2 L700.1 231.3 L701.9 230.5 L703.8 229.6 L705.6 228.8 L707.5 228.0 L709.3 227.1 L711.2 226.3 L713.0 225.6 L714.9 224.8 L716.8 224.0 L718.6 223.3 L720.5 222.5 L722.4 221.8 L724.3 221.1 L726.2 220.4 L728.1 219.7 L730.0 219.1 L731.9 218.4 L733.8 217.8 L735.8 217.2 L737.7 216.5 L739.6 215.9 L741.5 215.3 L743.5 214.8 L745.4 214.2 L747.4 213.6 L749.3 213.1 L751.3 212.6 L753.2 212.0 L755.2 211.5 L757.1 211.0 L759.1 210.5 L761.0 210.1 L763.0 209.6 L765.0 209.1 L766.9 208.7 L768.9 208.2 L770.9 207.7 L772.9 207.3 L774.8 206.9 L776.8 206.4 L778.8 206.0 L780.8 205.6 L782.7 205.2 L784.7 204.8 L786.7 204.4 L788.7 204.0 L790.7 203.6 L792.7 203.2 L794.6 202.9 L796.6 202.5 L798.6 202.2 L800.6 201.9 L802.6 201.6 L804.6 201.3 L806.6 201.0 L808.6 200.7 L810.6 200.4 L812.6 200.1 L814.6 199.9 L816.6 199.6 L818.6 199.4 L820.7 199.1 L822.7 198.9 L824.7 198.7 L826.7 198.4 L828.7 198.2 L830.7 198.0 L832.7 197.8 L834.7 197.6 L836.7 197.4 L838.7 197.2 L840.8 197.0 L842.8 196.9 L844.8 196.7 L846.8 196.5 L848.8 196.4 L850.8 196.2 L852.9 196.0 L854.9 195.9 L856.9 195.7 L858.9 195.6 L861.5 195.6 L864.2 196.0 L866.9 196.7 L869.6 197.9 L872.3 199.4 L875.1 201.3 L877.8 203.5 L880.5 206.0 L883.1 208.9 L885.7 212.1 L888.1 215.5 L890.5 219.2 L892.7 223.1 L894.8 227.3 L896.7 231.6 L898.5 236.1 L900.1 240.7 L901.5 245.3 L902.7 250.1 L903.8 254.9 L904.6 259.6 L905.2 264.4 L905.5 269.1 L905.7 273.7 L905.6 278.1 L905.3 282.4 L904.8 286.6 L904.1 290.5 L903.2 294.2 L902.1 297.7 L900.7 300.8 L899.2 303.7 L897.5 306.3 L895.6 308.5 L893.6 310.4 L891.4 311.9 L889.1 313.0 L886.7 313.8 L884.2 314.2 L881.8 314.1 L879.5 313.9 L877.1 313.8 L874.7 313.7 L872.3 313.7 L870.0 313.6 L867.6 313.7 L865.2 313.7 L862.8 313.8 L860.5 313.9 L858.1 314.0 L855.7 314.2 L853.3 314.3 L851.0 314.5 L848.6 314.7 L846.2 315.0 L843.9 315.2 L841.5 315.5 L839.1 315.7 L836.8 316.0 L834.4 316.3 L832.0 316.7 L829.7 317.0 L827.3 317.4 L825.0 317.7 L822.6 318.1 L820.3 318.5 L817.9 319.0 L815.6 319.4 L813.3 319.9 L810.9 320.4 L808.6 321.0 L806.3 321.6 L804.0 322.2 L801.7 322.8 L799.4 323.5 L797.2 324.2 L794.9 324.9 L792.7 325.7 L790.4 326.5 L788.2 327.3 L786.0 328.2 L783.8 329.1 L781.6 330.0 L779.4 330.9 L777.2 331.9 L775.0 332.9 L772.9 333.9 L770.7 334.9 L768.6 336.0 L766.5 337.0 L764.4 338.1 L762.3 339.2 L760.2 340.4 L758.1 341.6 L756.0 342.7 L754.0 344.0 L752.0 345.2 L749.9 346.5 L748.0 347.8 L746.0 349.1 L744.0 350.4 L742.1 351.8 L740.2 353.2 L738.3 354.6 L736.4 356.1 L734.5 357.6 L732.7 359.1 L730.9 360.6 L729.1 362.2 L727.3 363.8 L725.6 365.4 L723.9 367.1 L722.2 368.8 L720.6 370.5 L719.0 372.2 L717.4 374.0 L715.8 375.8 L714.3 377.6 L712.8 379.4 L711.3 381.3 L709.8 383.2 L708.3 385.0 L706.9 386.9 L705.4 388.8 L704.0 390.7 L702.6 392.6 L701.2 394.6 L699.8 396.5 L698.4 398.4 L697.0 400.3 L695.6 402.3 L694.2 404.2 L692.8 406.2 L691.4 408.1 L690.0 410.0 L688.6 412.0 L687.2 413.9 L685.8 415.8 L684.4 417.7 L683.0 419.6 L681.5 421.5 L680.1 423.4 L678.6 425.3 L677.1 427.2 L675.6 429.0 L674.1 430.9 L672.6 432.7 L671.0 434.5 L669.5 436.3 L667.9 438.1 L666.3 439.8 L664.7 441.6 L663.1 443.3 L661.4 445.1 L659.8 446.8 L658.1 448.5 L656.5 450.2 L654.8 452.0 L653.2 453.7 L651.5 455.4 L649.8 457.1 L648.2 458.8 L646.5 460.5 L644.8 462.2 L643.1 463.9 L641.5 465.6 L639.8 467.2 L638.1 468.9 L636.4 470.6 L634.7 472.3 L633.0 474.0 L631.3 475.6 L629.6 477.3 L627.9 479.0 L626.2 480.6 L624.4 482.2 L622.7 483.9 L620.9 485.5 L619.2 487.1 L617.4 488.6 L615.6 490.2 L613.7 491.7 L611.9 493.2 L610.0 494.7 L608.2 496.2 L606.3 497.7 L604.4 499.1 L602.5 500.5 L600.6 501.9 L598.6 503.3 L596.7 504.7 L594.7 506.1 L592.8 507.4 L590.8 508.8 L588.8 510.1 L586.8 511.4 L584.8 512.7 L582.8 514.0 L580.8 515.2 L578.8 516.5 L576.8 517.8 L574.8 519.0 L572.7 520.3 L570.7 521.5 L568.7 522.8 L566.6 524.0 L564.6 525.3 L562.6 526.6 L560.6 527.9 L558.6 529.1 L556.6 530.4 L554.6 531.7 L552.6 533.0 L550.6 534.3 L548.6 535.7 L546.6 537.0 L544.6 538.3 L542.6 539.6 L540.6 540.9 L538.7 542.2 L536.7 543.5 L534.6 544.8 L532.6 546.1 L530.6 547.3 L528.6 548.6 L526.5 549.8 L524.5 551.0 L522.4 552.2 L520.3 553.4 L518.3 554.5 L516.2 555.6 L514.1 556.8 L511.9 557.9 L509.8 558.9 L507.7 560.0 L505.5 561.0 L503.4 562.0 L501.2 563.0 L499.0 564.0 L496.9 564.9 L494.7 565.9 L492.5 566.8 L490.2 567.7 L488.0 568.5 L485.8 569.3 L483.6 570.2 L481.3 570.9 L479.1 571.7 L476.8 572.4 L474.5 573.2 L472.2 573.8 L470.0 574.5 L467.7 575.2 L465.4 575.8 L463.1 576.4 L460.7 576.9 L458.4 577.5 L456.1 578.0 L453.8 578.5 L451.4 579.0 L449.1 579.5 L446.8 579.9 L444.4 580.3 L442.1 580.7 L439.7 581.1 L437.4 581.4 L435.0 581.8 L432.6 582.1 L430.3 582.3 L427.9 582.6 L425.5 582.8 L423.2 583.0 L420.8 583.1 L418.4 583.2 L416.0 583.3 L413.7 583.4 L411.3 583.4 L408.9 583.4 L406.5 583.3 L404.2 583.3 L401.8 583.2 L399.4 583.1 L397.0 583.0 L394.6 582.8 L392.3 582.6 L389.9 582.4 L387.5 582.2 L385.1 582.0 L382.8 581.8 L380.4 581.5 L378.0 581.2 L375.7 580.9 L373.3 580.6 L371.0 580.3 L368.6 579.9 L366.2 579.5 L363.9 579.2 L361.5 578.8 L359.2 578.3 L356.9 577.9 L354.5 577.4 L352.2 576.9 L349.9 576.4 L347.5 575.9 L345.2 575.4 L342.9 574.8 L340.6 574.3 L338.3 573.7 L336.0 573.1 L333.7 572.5 L331.4 571.9 L329.0 571.3 L326.7 570.6 L324.4 570.0 L322.2 569.4 L319.9 568.7 L317.6 568.1 L315.3 567.5 L313.0 566.8 L310.7 566.2 L308.4 565.5 L306.1 564.9 L303.8 564.2 L301.5 563.6 L299.2 562.9 L296.9 562.2 L294.6 561.6 L292.3 560.9 L290.1 560.2 L287.8 559.6 L285.5 558.9 L283.2 558.2 L280.9 557.5 L278.6 556.8 L276.3 556.1 L274.1 555.5 L271.8 554.8 L269.5 554.1 L275.2 555.3 L281.0 555.7 L286.8 555.2 L292.7 553.8 L298.5 551.5 L304.1 548.4 L309.6 544.4 L314.9 539.7 L319.9 534.2 L324.6 528.0 L328.9 521.2 L332.9 513.8 L336.4 506.0 L339.4 497.7 L341.9 489.1 L343.9 480.2 L345.3 471.1 L346.2 461.9 L346.6 452.7 L346.3 443.6 L345.5 434.7 L344.1 426.0 L342.2 417.6 L339.8 409.7 L336.9 402.2 L333.4 395.3 L329.6 389.0 L325.3 383.4 L320.7 378.5Z" fill="none" stroke="#46e6e6" stroke-width="1"/><defs><pattern id="rg" width="4.4" height="4.6" patternUnits="userSpaceOnUse" patternTransform="rotate(4)"><rect width="4.4" height="4.6" fill="#a20303"/><path d="M0 0.4H4.4M0.4 0V4.6" stroke="#e42828" stroke-width="1"/></pattern></defs>
<ellipse cx="286.2" cy="461.0" rx="59.9" ry="95.0" transform="rotate(5.75 286.2 461.0)" fill="url(#rg)" stroke="#e02828" stroke-width="0.8"/></svg>
<div class="abs" style="left:0;top:697px;width:1280px;height:21px;background:#efefef"></div>
<div class="abs" style="left:0;top:718px;width:1280px;height:2px;background:#000"></div>
<div class="abs" style="left:875px;top:700px;width:1px;height:18px;background:#c4c4c4"></div>
<div class="abs" style="left:884px;top:700px;width:1px;height:18px;background:#c4c4c4"></div>
<div class="abs" style="left:970px;top:700px;width:1px;height:18px;background:#c4c4c4"></div>
<div class="abs" style="left:1127px;top:700px;width:1px;height:18px;background:#c4c4c4"></div>
<div class="abs" style="left:1229px;top:700px;width:1px;height:18px;background:#c4c4c4"></div>
<div class="tl" style="left:889px;top:700px;font-size:9.3px;line-height:11px;color:#222">Num Blocks : 48<br>Num Cells&nbsp; :&nbsp;&nbsp; 49152</div>
<div class="abs" style="left:975px;top:700px;width:19px;height:19px;border:1px solid #a8a8a8;border-radius:2px;background:linear-gradient(#fafafa,#e4e4e4)"></div>
<svg class="abs" style="left:977px;top:703px" width="16" height="13" viewBox="0 0 16 13"><path d="M0 6.5L7 1V12Z" fill="#4a78b8"/><rect x="9" y="1" width="1.6" height="11" fill="#4a78b8"/><rect x="12" y="1" width="1.6" height="11" fill="#4a78b8"/></svg>
<div class="tl" style="left:995px;top:703px;color:#222">Surface id :</div>
<div class="abs" style="left:1041px;top:703px;width:39px;height:14px;background:#fff;border:1px solid #b8b8b8"></div>
<div class="tl" style="left:1043px;top:704px;font-size:9.5px">0</div>
<div class="abs" style="left:1069px;top:704px;width:10px;height:12px;background:linear-gradient(#fafafa,#ddd);border-left:1px solid #ccc"></div>
<div class="abs" style="left:1070px;top:708px;width:0;height:0;border-left:4px solid transparent;border-right:4px solid transparent;border-top:4px solid #111"></div>
<div class="abs" style="left:1082px;top:700px;width:19px;height:19px;border:1px solid #a8a8a8;border-radius:2px;background:linear-gradient(#fafafa,#e4e4e4)"></div>
<svg class="abs" style="left:1084px;top:703px" width="16" height="13" viewBox="0 0 16 13"><path d="M16 6.5L9 1V12Z" fill="#4a78b8"/><rect x="2" y="1" width="1.6" height="11" fill="#6a90c8"/><rect x="5" y="1" width="1.6" height="11" fill="#6a90c8"/></svg>
<div class="abs" style="left:1104px;top:700px;width:19px;height:19px;border:1px solid #3a6ab0;border-radius:2px;background:linear-gradient(#dce8f4,#b8d0e8)"></div>
<svg class="abs" style="left:1106px;top:702px" width="15" height="16" viewBox="0 0 15 16"><circle cx="7" cy="6" r="4.5" fill="#f4f0d0" stroke="#aaa" stroke-width="0.6"/><rect x="5" y="10" width="4" height="3" fill="#bbb"/><path d="M7 2V14" stroke="#333" stroke-width="0.8"/><rect x="1" y="13" width="4" height="2" fill="#2a9a3a"/><rect x="10" y="13" width="4" height="2" fill="#d03030"/></svg>
<div class="abs" style="left:1132px;top:702px;width:93px;height:16px;border:1px solid #a8a8a8;border-radius:2px;background:linear-gradient(#fafafa,#e6e6e6)"></div>
<div class="tl" style="left:1138px;top:704px;font-size:9.9px;color:#222">Tag Topology State</div>
<div class="abs" style="left:1216px;top:707px;width:0;height:0;border-left:4px solid transparent;border-right:4px solid transparent;border-top:4px solid #999"></div>
<div class="abs" style="left:1235px;top:702px;width:30px;height:16px;border:1px solid #b8b8b8;border-radius:2px;background:linear-gradient(#f4f4f4,#e0e0e0)"></div>
<div class="tl" style="left:1241px;top:704px;font-size:9.9px;color:#222">Help</div>
<svg class="abs" style="left:1148px;top:711px" width="10" height="15" viewBox="0 0 10 15"><path d="M1 1V12L3.5 9.5L5.5 14L7 13.3L5 9H8.5Z" fill="#fff" stroke="#111" stroke-width="0.9"/></svg>
<div class="abs" style="left:1085px;top:31px;width:186px;height:666px;background:#57606d"></div>
<div class="abs" style="left:1085px;top:31px;width:1px;height:666px;background:#d8dde2"></div>
<div class="abs" style="left:1271px;top:31px;width:9px;height:666px;background:#e6e6e6;border-left:1px solid #c4c4c4"></div>
<div class="hdr" style="top:33px">Toggle Display<div class="tri"></div></div>
<div class="abs" style="left:1087px;top:46px;width:183px;height:64px;background:#f6f7f8"></div>
<div class="abs" style="left:1093px;top:46px;width:171px;height:64px;background:#f0f0f0;border-left:1px solid #a0a0a0;border-right:1px solid #d0d0d0;border-bottom:1px solid #c0c0c0"></div>
<div class="chev" style="left:1094px;top:51.5px"></div>
<div class="cb" style="left:1102px;top:49.0px"></div>
<div class="tl" style="left:1116px;top:47.0px">Surface</div>
<div class="chev" style="left:1094px;top:62.9px"></div>
<div class="cb" style="left:1102px;top:60.4px"></div>
<div class="tl" style="left:1116px;top:58.4px">Wireframe</div>
<div class="chev" style="left:1094px;top:74.3px"></div>
<div class="cb" style="left:1102px;top:71.8px"></div>
<svg class="abs" style="left:1103px;top:72.8px" width="8" height="8" viewBox="0 0 8 8"><path d="M1 4L3.2 6.5L7 1" fill="none" stroke="#333" stroke-width="1"/></svg>
<div class="tl" style="left:1116px;top:69.8px">Grid</div>
<div class="chev" style="left:1094px;top:85.7px"></div>
<div class="cb" style="left:1102px;top:83.2px"></div>
<div class="tl" style="left:1116px;top:81.2px">Geometry</div>
<div class="chev" style="left:1094px;top:97.1px"></div>
<div class="cb" style="left:1102px;top:94.6px"></div>
<div class="tl" style="left:1116px;top:92.6px">Others</div>
<div class="hdr" style="top:111px">Show/Hide<div class="tri"></div></div>
<div class="abs" style="left:1087px;top:125px;width:184px;height:157px;background:#57606d"></div>
<div class="abs" style="left:1089px;top:127px;width:58px;height:13px;background:linear-gradient(#fbfbfb,#ececec);font-size:10px;line-height:13px;text-align:center;color:#222;-webkit-text-stroke:0.2px #222">Slices</div>
<div class="abs" style="left:1149px;top:127px;width:58px;height:13px;background:linear-gradient(#b0c8dc,#88a8c4);font-size:10px;line-height:13px;text-align:center;color:#222;-webkit-text-stroke:0.2px #222">Blocks</div>
<div class="abs" style="left:1209px;top:127px;width:58px;height:13px;background:linear-gradient(#b0c8dc,#88a8c4);font-size:10px;line-height:13px;text-align:center;color:#222;-webkit-text-stroke:0.2px #222">Grids</div>
<div class="abs" style="left:1089px;top:140px;width:179px;height:104px;background:linear-gradient(#f8f8f8,#eeeeee)"></div>
<div class="abs" style="left:1089px;top:245px;width:179px;height:33px;background:#e9e9e9"></div>
<div class="chev" style="left:1096px;top:144.5px;transform:rotate(45deg)"></div>
<div class="tl" style="left:1104px;top:142px;font-size:10px">All sheets</div>
<div class="abs" style="left:1109px;top:154px;width:87px;height:12px;background:#d6d6d6"></div>
<div class="cb" style="left:1110px;top:155px"></div>
<svg class="abs" style="left:1111px;top:156px" width="8" height="8" viewBox="0 0 8 8"><path d="M1 4L3.2 6.5L7 1" fill="none" stroke="#333" stroke-width="1"/></svg>
<div class="tl" style="left:1123px;top:154px;font-size:9.9px">surface 1 (s:0)</div>
<svg class="abs" style="left:1184px;top:155px" width="11" height="11" viewBox="0 0 11 11"><path d="M1 5A4 4 0 0 1 8 2" fill="none" stroke="#e0a040" stroke-width="1.2"/><path d="M3 3L10 10M10 3L3 10" stroke="#a878c0" stroke-width="1.6"/></svg>
<div class="cb" style="left:1110px;top:167px"></div>
<svg class="abs" style="left:1111px;top:168px" width="8" height="8" viewBox="0 0 8 8"><path d="M1 4L3.2 6.5L7 1" fill="none" stroke="#333" stroke-width="1"/></svg>
<div class="tl" style="left:1123px;top:166px;font-size:9.9px">surface 2 (s:1)</div>
<svg class="abs" style="left:1184px;top:167px" width="11" height="11" viewBox="0 0 11 11"><path d="M1 5A4 4 0 0 1 8 2" fill="none" stroke="#e0a040" stroke-width="1.2"/><path d="M3 3L10 10M10 3L3 10" stroke="#e03020" stroke-width="1.6"/></svg>
<div class="cb" style="left:1110px;top:179px"></div>
<svg class="abs" style="left:1111px;top:180px" width="8" height="8" viewBox="0 0 8 8"><path d="M1 4L3.2 6.5L7 1" fill="none" stroke="#333" stroke-width="1"/></svg>
<div class="tl" style="left:1123px;top:178px;font-size:9.9px">surface 3 (s:2)</div>
<svg class="abs" style="left:1184px;top:179px" width="11" height="11" viewBox="0 0 11 11"><path d="M1 5A4 4 0 0 1 8 2" fill="none" stroke="#e0a040" stroke-width="1.2"/><path d="M3 3L10 10M10 3L3 10" stroke="#e03020" stroke-width="1.6"/></svg>
<div class="btn" style="left:1093px;top:250px;width:24px;height:23px"></div>
<div class="btn" style="left:1123px;top:250px;width:24px;height:23px"></div>
<div class="btn" style="left:1181px;top:250px;width:24px;height:23px"></div>
<div class="btn" style="left:1210px;top:250px;width:24px;height:23px"></div>
<div class="btn" style="left:1239px;top:250px;width:24px;height:23px"></div>
<svg class="abs" style="left:1097px;top:253px" width="16" height="16" viewBox="0 0 16 16"><path d="M6 3L13 1V14L6 15Z" fill="#c8c8f0" stroke="#5a5ac8" stroke-width="0.8"/><path d="M6 7H13M6 10H13M9 2V15" stroke="#5a5ac8" stroke-width="0.6"/><path d="M2 14L7 9" stroke="#3a3aa0" stroke-width="1.4"/></svg>
<svg class="abs" style="left:1127px;top:253px" width="16" height="16" viewBox="0 0 16 16"><path d="M2 3L9 1V14L2 15Z" fill="#c8c8f0" stroke="#5a5ac8" stroke-width="0.8"/><path d="M2 7H9M2 10H9M5 2V15" stroke="#5a5ac8" stroke-width="0.6"/><path d="M9 9L14 4" stroke="#3a3aa0" stroke-width="1.4"/></svg>
<svg class="abs" style="left:1185px;top:253px" width="16" height="16" viewBox="0 0 16 16"><path d="M1 4L5 2V14L1 15Z" fill="#c8c8f0" stroke="#5a5ac8" stroke-width="0.7"/><path d="M5 3L10 1V13L5 14Z" fill="#d8d8f4" stroke="#5a5ac8" stroke-width="0.7"/><path d="M10 2L15 0.5V12L10 13Z" fill="#c8c8f0" stroke="#5a5ac8" stroke-width="0.7"/></svg>
<svg class="abs" style="left:1214px;top:253px" width="16" height="16" viewBox="0 0 16 16"><path d="M1 4L5 2V14L1 15Z" fill="#c8c8f0" stroke="#5a5ac8" stroke-width="0.7"/><path d="M5 3L10 1V13L5 14Z" fill="#d8d8f4" stroke="#5a5ac8" stroke-width="0.7"/><path d="M10 2L15 0.5V12L10 13Z" fill="#c8c8f0" stroke="#5a5ac8" stroke-width="0.7"/></svg>
<svg class="abs" style="left:1243px;top:253px" width="16" height="16" viewBox="0 0 16 16"><path d="M1 4L5 2V14L1 15Z" fill="#c8c8f0" stroke="#5a5ac8" stroke-width="0.7"/><path d="M5 3L10 1V13L5 14Z" fill="#d8d8f4" stroke="#5a5ac8" stroke-width="0.7"/><path d="M10 2L15 0.5V12L10 13Z" fill="#c8c8f0" stroke="#5a5ac8" stroke-width="0.7"/></svg>
<div class="hdr" style="top:282px">Display<div class="tri"></div></div>
<div class="abs" style="left:1087px;top:296px;width:183px;height:82px;background:#8b8e94"></div>
<div class="abs" style="left:1093px;top:336px;width:172px;height:1px;background:#5a5e66"></div>
<div class="btn" style="left:1094px;top:300px"></div>
<div class="plbl" style="left:1105px;top:324px">Mesh</div>
<div class="btn" style="left:1131px;top:300px"></div>
<div class="plbl" style="left:1142px;top:324px">Faces</div>
<div class="btn" style="left:1167px;top:300px"></div>
<div class="plbl" style="left:1178px;top:324px">Slice</div>
<div class="btn" style="left:1203px;top:300px"></div>
<div class="plbl" style="left:1214px;top:324px">Colour</div>
<div class="btn" style="left:1239px;top:300px"></div>
<div class="plbl" style="left:1250px;top:324px">Quality</div>
<div class="btn" style="left:1094px;top:343px"></div>
<div class="plbl" style="left:1105px;top:367px">Spacing</div>
<div class="btn" style="left:1131px;top:343px"></div>
<div class="plbl" style="left:1142px;top:367px">Trim</div>
<svg class="abs" style="left:1097px;top:303px" width="16" height="16" viewBox="0 0 16 16"><path d="M1 4L5 1H16V12L12 16H1Z" fill="#eef" stroke="#7a7ad0" stroke-width="0.8"/><path d="M1 8H12M1 12H12M4.7 4V16M8.4 4V16M12 4V16M12 8L16 5M12 12L16 9M1 4H12L16 1M5 1L1 4M8.5 1L5 4M12.3 1L8.5 4" stroke="#7a7ad0" stroke-width="0.8" fill="none"/></svg>
<svg class="abs" style="left:1134px;top:303px" width="16" height="16" viewBox="0 0 16 16"><path d="M1 4L5 1H16V12L12 16H1Z" fill="#fff"/><rect x="1" y="4" width="11" height="12" fill="#e87a6a"/><path d="M12 4L16 1V12L12 16Z" fill="#8a8ad8"/><path d="M1 4L5 1H16L12 4Z" fill="#f0b070"/><path d="M1 8H12M1 12H12M4.7 4V16M8.4 4V16" stroke="#fff" stroke-width="1.2"/><path d="M12 8L16 5M12 12L16 9" stroke="#fff" stroke-width="1"/></svg>
<svg class="abs" style="left:1170px;top:303px" width="16" height="16" viewBox="0 0 16 16"><path d="M1 4L5 1H15V11L11 15H1Z" fill="none" stroke="#7a8ab0" stroke-width="0.8"/><rect x="4" y="4" width="8" height="10" fill="#f4d0d8" stroke="#c03050" stroke-width="0.8"/><path d="M4 8H12M4 11H12M8 4V15" stroke="#c03050" stroke-width="0.8"/></svg>
<svg class="abs" style="left:1206px;top:303px" width="16" height="16" viewBox="0 0 16 16"><path d="M1 4L5 1H16V12L12 16H1Z" fill="#fff"/><rect x="1" y="4" width="11" height="12" fill="#e87070"/><path d="M12 4L16 1V12L12 16Z" fill="#e0a0a0"/><path d="M1 4L5 1H16L12 4Z" fill="#f0b080"/><path d="M1 8H12M1 12H12M4.7 4V16M8.4 4V16" stroke="#fff" stroke-width="1.2"/><path d="M12 8L16 5M12 12L16 9" stroke="#fff" stroke-width="1"/><path d="M8 12L15 2" stroke="#222" stroke-width="1.6"/></svg>
<svg class="abs" style="left:1242px;top:303px" width="16" height="16" viewBox="0 0 16 16"><rect x="1" y="1" width="14" height="14" fill="#fff" stroke="#999" stroke-width="0.6"/><rect x="3" y="3" width="2" height="10" fill="#2a9a3a"/><rect x="6" y="6" width="2" height="7" fill="#2a9a3a"/><rect x="9" y="9" width="2" height="4" fill="#2a9a3a"/><path d="M2 13H15" stroke="#333" stroke-width="0.8"/></svg>
<svg class="abs" style="left:1097px;top:346px" width="16" height="16" viewBox="0 0 16 16"><rect x="2" y="1" width="12" height="14" fill="#e8eef4" stroke="#8a9ab0" stroke-width="0.7"/><rect x="2" y="1" width="4" height="14" fill="#f0c040" stroke="#b08020" stroke-width="0.6"/><path d="M10 3V13M8 5L10 3L12 5M8 11L10 13L12 11" fill="none" stroke="#333" stroke-width="0.9"/></svg>
<svg class="abs" style="left:1134px;top:346px" width="16" height="16" viewBox="0 0 16 16"><path d="M1 4L5 1H16V12L12 16H1Z" fill="#eef" stroke="#7a7ad0" stroke-width="0.8"/><path d="M1 8H12M1 12H12M4.7 4V16M8.4 4V16M12 4V16M12 8L16 5M12 12L16 9M1 4H12L16 1M5 1L1 4M8.5 1L5 4M12.3 1L8.5 4" stroke="#7a7ad0" stroke-width="0.8" fill="none"/><path d="M8 10L15 1M9 2L15 8" stroke="#222" stroke-width="1.2"/></svg>
<div class="hdr" style="top:380px">Edit<div class="tri"></div></div>
<div class="abs" style="left:1087px;top:394px;width:183px;height:84px;background:#8b8e94"></div>
<div class="abs" style="left:1093px;top:434px;width:172px;height:1px;background:#5a5e66"></div>
<div class="btn" style="left:1094px;top:398px"></div>
<div class="plbl" style="left:1105px;top:422px">Update</div>
<div class="btn" style="left:1130px;top:398px"></div>
<div class="plbl" style="left:1141px;top:422px">Density</div>
<div class="btn" style="left:1163px;top:398px"></div>
<div class="plbl" style="left:1174px;top:422px">Mirror</div>
<div class="btn" style="left:1195px;top:398px"></div>
<div class="plbl" style="left:1206px;top:422px">Extract</div>
<div class="btn" style="left:1235px;top:398px"></div>
<div class="plbl" style="left:1246px;top:422px">Clustering</div>
<div class="btn" style="left:1095px;top:440px"></div>
<div class="plbl" style="left:1106px;top:464px">Extrude</div>
<div class="btn" style="left:1130px;top:440px"></div>
<div class="plbl" style="left:1141px;top:464px">Node</div>
<div class="btn" style="left:1163px;top:440px"></div>
<div class="plbl" style="left:1174px;top:464px">Merge</div>
<div class="btn" style="left:1195px;top:440px"></div>
<div class="plbl" style="left:1206px;top:464px">Zones</div>
<svg class="abs" style="left:1097px;top:401px" width="16" height="16" viewBox="0 0 16 16"><path d="M1 4L5 1H16V12L12 16H1Z" fill="#fff"/><rect x="1" y="4" width="11" height="12" fill="#f0b0b0"/><path d="M12 4L16 1V12L12 16Z" fill="#e8a0a0"/><path d="M1 4L5 1H16L12 4Z" fill="#f0a0a0"/><path d="M1 8H12M1 12H12M4.7 4V16M8.4 4V16" stroke="#fff" stroke-width="1.2"/><path d="M12 8L16 5M12 12L16 9" stroke="#fff" stroke-width="1"/><circle cx="10" cy="10" r="5" fill="#2aa040"/><path d="M7 10A3 3 0 0 1 12 8M13 10A3 3 0 0 1 8 12" stroke="#fff" stroke-width="1.1" fill="none"/></svg>
<svg class="abs" style="left:1133px;top:401px" width="16" height="16" viewBox="0 0 16 16"><path d="M2 1V15M5 1V15M12 1V15M15 1V15M2 5H5M2 9H5M12 5H15M12 9H15" stroke="#4a4aa8" stroke-width="0.9"/><path d="M6 8H11M9 6L11 8L9 10" stroke="#111" stroke-width="1" fill="none"/></svg>
<svg class="abs" style="left:1166px;top:401px" width="16" height="16" viewBox="0 0 16 16"><path d="M8 2H15V12H8Z" fill="#f4d8b0" stroke="#c09060" stroke-width="0.7"/><path d="M1 4L7 2V12L1 13Z" fill="#d8e8d0" stroke="#8a9a80" stroke-width="0.7"/><path d="M3 11Q8 17 13 11" fill="none" stroke="#2aa040" stroke-width="1.8"/></svg>
<svg class="abs" style="left:1198px;top:401px" width="16" height="16" viewBox="0 0 16 16"><path d="M2 5L7 1H15V10L10 14H2Z" fill="#f4f4f4" stroke="#7a8ab0" stroke-width="0.7"/><path d="M4 7H10V13H4Z" fill="#f0c060" stroke="#b08020" stroke-width="0.7"/><path d="M11 14A3 3 0 0 0 14 10" stroke="#1a4aa8" stroke-width="1.4" fill="none"/></svg>
<svg class="abs" style="left:1238px;top:401px" width="16" height="16" viewBox="0 0 16 16"><path d="M1 2Q8 6 15 2V14Q8 9 1 14Z" fill="#c8c0ec" stroke="#6a5ac0" stroke-width="0.8"/><path d="M1 6Q8 9 15 6M1 10Q8 12 15 10" stroke="#6a5ac0" stroke-width="0.6" fill="none"/></svg>
<svg class="abs" style="left:1098px;top:443px" width="16" height="16" viewBox="0 0 16 16"><path d="M1 4L5 1H16V12L12 16H1Z" fill="#eef" stroke="#7a7ad0" stroke-width="0.8"/><path d="M1 8H12M1 12H12M4.7 4V16M8.4 4V16M12 4V16M12 8L16 5M12 12L16 9M1 4H12L16 1M5 1L1 4M8.5 1L5 4M12.3 1L8.5 4" stroke="#7a7ad0" stroke-width="0.8" fill="none"/><path d="M8 14H15M13 12L15 14L13 16" stroke="#d03030" stroke-width="1" fill="none"/></svg>
<svg class="abs" style="left:1133px;top:443px" width="16" height="16" viewBox="0 0 16 16"><path d="M2 3V15M5 3V15M8 3V15M11 3V15M2 6H11M2 9H11M2 12H11" stroke="#40a040" stroke-width="0.9" stroke-dasharray="1.5 1.2"/><path d="M9 7L15 1" stroke="#111" stroke-width="1.3"/><circle cx="9" cy="7" r="1.5" fill="#d03030"/></svg>
<svg class="abs" style="left:1166px;top:443px" width="16" height="16" viewBox="0 0 16 16"><rect x="2" y="1" width="5" height="8" fill="#c8d8f0" stroke="#5a7ab0" stroke-width="0.6"/><rect x="9" y="1" width="5" height="8" fill="#f4d0a0" stroke="#c09060" stroke-width="0.6"/><path d="M2 10L8 15L14 10" fill="none" stroke="#2aa040" stroke-width="2"/></svg>
<svg class="abs" style="left:1198px;top:443px" width="16" height="16" viewBox="0 0 16 16"><path d="M6 1L15 9L11 14L4 7Z" fill="#e8d898" stroke="#9a8a40" stroke-width="0.8"/><circle cx="7" cy="3.5" r="1.2" fill="#fff" stroke="#777" stroke-width="0.5"/><path d="M9 5L3 13M4 7L10 12" stroke="#222" stroke-width="1"/><circle cx="2.5" cy="13.5" r="1.8" fill="none" stroke="#222" stroke-width="1"/><circle cx="10.5" cy="13" r="1.8" fill="none" stroke="#222" stroke-width="1"/></svg>
<div class="hdr" style="top:478px">Popups</div>
<svg class="abs" style="left:1253px;top:480px" width="9" height="9" viewBox="0 0 9 9"><path d="M1.5 1.5L7.5 7.5M7.5 1.5L1.5 7.5" stroke="#111" stroke-width="1.8"/></svg>
<div class="abs" style="left:1088px;top:494px;width:181px;height:90px;background:linear-gradient(#fafafa,#e8e8e8);border:1px solid #c8c8c8"></div>
</body></html>
